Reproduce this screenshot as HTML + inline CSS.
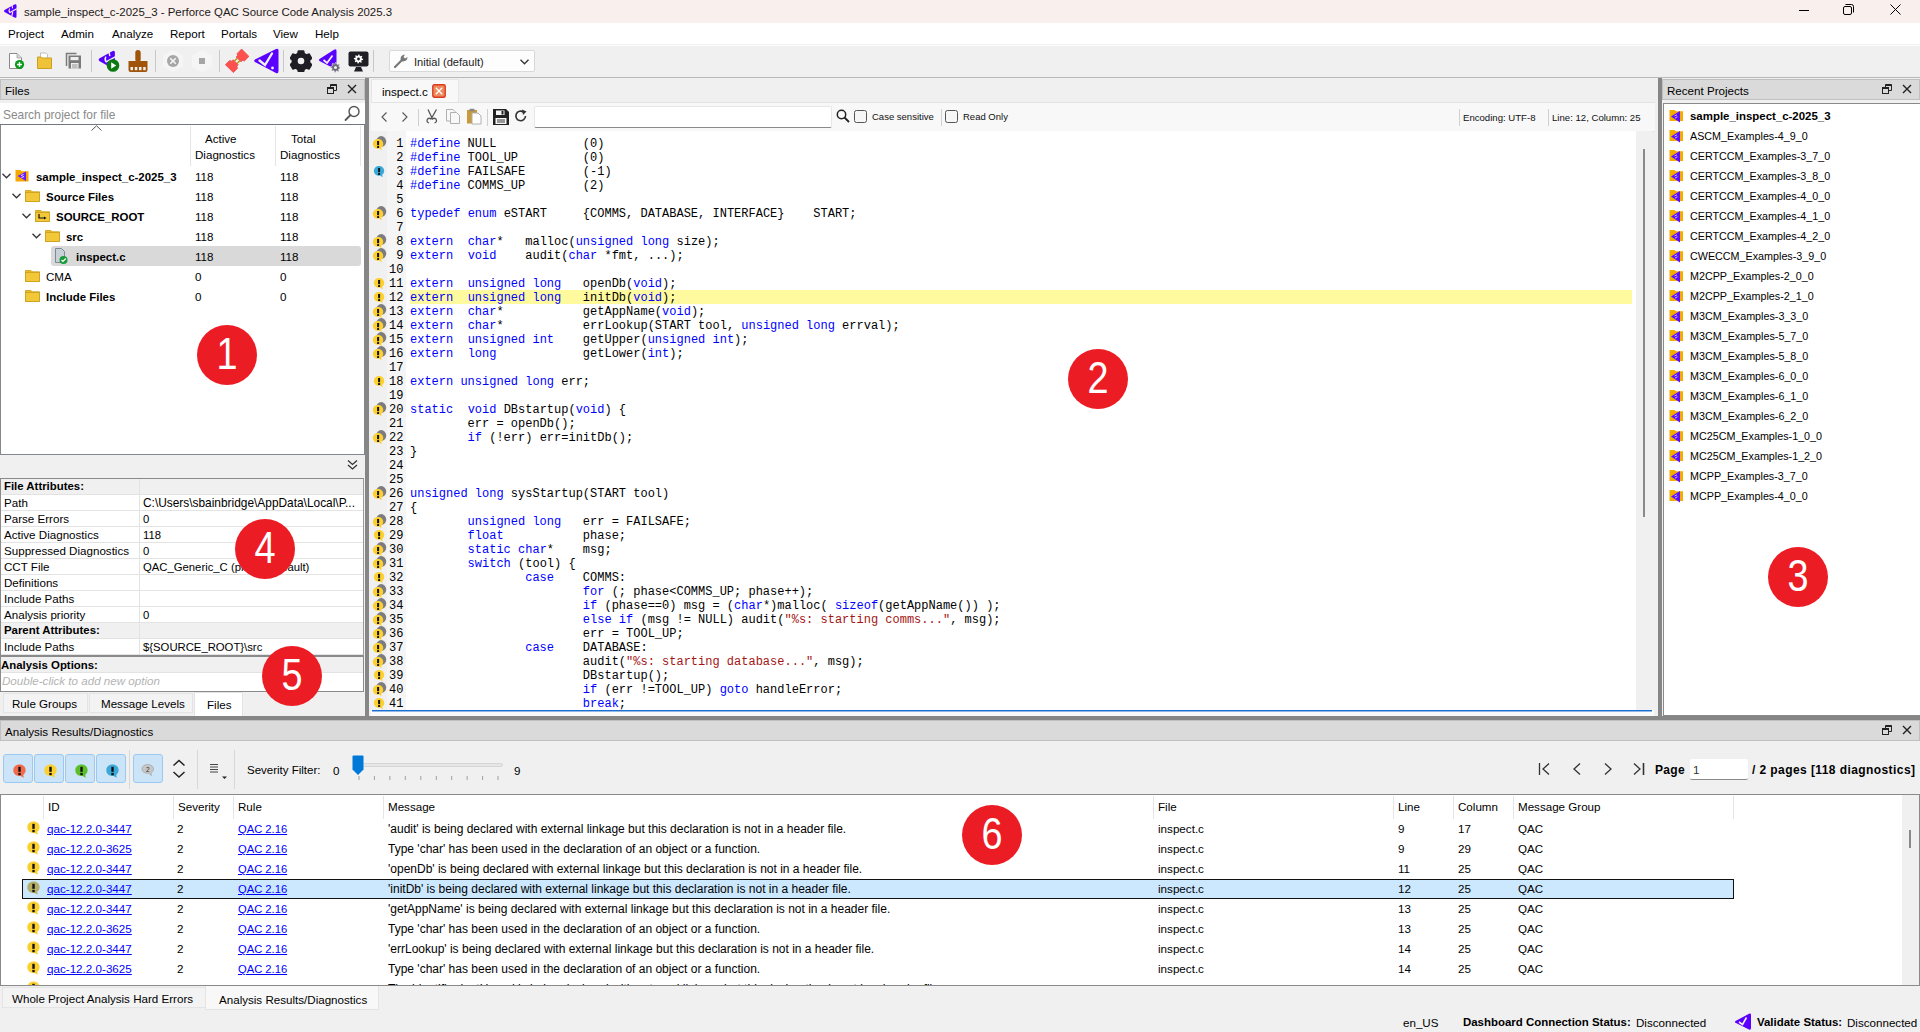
<!DOCTYPE html><html><head><meta charset="utf-8"><style>
html,body{margin:0;padding:0;}
body{width:1920px;height:1032px;position:relative;overflow:hidden;background:#f0f0f0;font-family:"Liberation Sans",sans-serif;}
div{box-sizing:border-box;}
svg{display:block}
.code{position:absolute;font-family:"Liberation Mono",monospace;font-size:12px;line-height:14px;white-space:pre;color:#000;}
.k{color:#0000ff}
.s{color:#a31515}
.lnk{color:#0000ee;text-decoration:underline}
</style></head><body>
<div style="position:absolute;left:0px;top:0px;width:1920px;height:23px;background:#f9efec;"></div><svg style="position:absolute;left:0px;top:0px" width="20" height="22" viewBox="0 0 20 22"><path d="M4.5 10 Q3.5 11 4.5 12 L14.5 17.5 Q16.5 18.5 16.5 16.5 V5.5 Q16.5 3.5 14.5 4.5 Z" fill="#5500ff"/><path d="M12 5 L12.6 8.3 M9.6 8.6 Q8.3 11 9.8 12.6 L16.8 8.8 M12.8 12 L11.8 16" stroke="#f8efed" stroke-width="1.1" fill="none"/></svg><div style="position:absolute;left:24px;top:5px;font-size:11.45px;line-height:15px;color:#1a1a1a;white-space:pre;font-family:'Liberation Sans', sans-serif;">sample_inspect_c-2025_3 - Perforce QAC Source Code Analysis 2025.3</div><svg style="position:absolute;left:1798px;top:3px" width="14" height="14"><path d="M1 7.5 H11" stroke="#000" stroke-width="1"/></svg><svg style="position:absolute;left:1842px;top:3px" width="14" height="14"><rect x="1.5" y="3.5" width="8" height="8" rx="1.5" fill="none" stroke="#000"/><path d="M3.5 1.5 H9.5 Q11.5 1.5 11.5 3.5 V9.5" fill="none" stroke="#000"/></svg><svg style="position:absolute;left:1889px;top:3px" width="14" height="14"><path d="M1.5 1.5 L11.5 11.5 M11.5 1.5 L1.5 11.5" stroke="#000" stroke-width="1"/></svg><div style="position:absolute;left:0px;top:23px;width:1920px;height:22px;background:#ffffff;"></div><div style="position:absolute;left:0px;top:44px;width:1920px;height:1px;background:#f2f2f2;"></div><div style="position:absolute;left:8px;top:26px;font-size:11.6px;line-height:15px;color:#000;white-space:pre;font-family:'Liberation Sans', sans-serif;">Project</div><div style="position:absolute;left:61px;top:26px;font-size:11.6px;line-height:15px;color:#000;white-space:pre;font-family:'Liberation Sans', sans-serif;">Admin</div><div style="position:absolute;left:112px;top:26px;font-size:11.6px;line-height:15px;color:#000;white-space:pre;font-family:'Liberation Sans', sans-serif;">Analyze</div><div style="position:absolute;left:170px;top:26px;font-size:11.6px;line-height:15px;color:#000;white-space:pre;font-family:'Liberation Sans', sans-serif;">Report</div><div style="position:absolute;left:221px;top:26px;font-size:11.6px;line-height:15px;color:#000;white-space:pre;font-family:'Liberation Sans', sans-serif;">Portals</div><div style="position:absolute;left:273px;top:26px;font-size:11.6px;line-height:15px;color:#000;white-space:pre;font-family:'Liberation Sans', sans-serif;">View</div><div style="position:absolute;left:315px;top:26px;font-size:11.6px;line-height:15px;color:#000;white-space:pre;font-family:'Liberation Sans', sans-serif;">Help</div><div style="position:absolute;left:0px;top:45px;width:1920px;height:33px;background:#f0f0f0;border-top:1px solid #fcfcfc"></div><div style="position:absolute;left:0px;top:77px;width:1920px;height:1px;background:#b8b8b8;"></div><div style="position:absolute;left:0px;top:78px;width:1920px;height:1px;background:#f4f4f4;"></div><svg style="position:absolute;left:8px;top:52px" width="18" height="18" viewBox="0 0 18 18"><path d="M1.5 1.5 H9 L13.5 6 V16.5 H1.5 Z" fill="#fff" stroke="#8a8a8a"/><path d="M9 1.5 V6 H13.5" fill="#d8d8d8" stroke="#8a8a8a" stroke-width="0.6"/><circle cx="11.5" cy="12.5" r="4.6" fill="#0a9a1a"/><path d="M11.5 10 V15 M9 12.5 H14" stroke="#fff" stroke-width="1.4"/></svg><svg style="position:absolute;left:36px;top:52px" width="18" height="18" viewBox="0 0 18 18"><path d="M4.5 1 H10 L11.5 2.5 V7 H4.5 Z" fill="#fff" stroke="#999" stroke-width="0.6"/><path d="M1.5 5 H5 L6 6 H15.5 V16.5 H1.5 Z" fill="#f0c23a" stroke="#c9a020"/></svg><svg style="position:absolute;left:65px;top:52px" width="18" height="18" viewBox="0 0 18 18"><path d="M1.5 14 V1.5 H11.5" fill="none" stroke="#7a7a7a" stroke-width="1.5"/><rect x="3.5" y="3.5" width="12.5" height="13" fill="#7a7a7a"/><rect x="5.5" y="5" width="8" height="3.2" fill="#eee"/><rect x="6" y="11" width="7.5" height="5.5" fill="#eee"/><path d="M7 13 H12.5 M7 15 H12.5" stroke="#7a7a7a" stroke-width="0.8"/></svg><div style="position:absolute;left:91px;top:50px;width:1px;height:22px;background:#c8c8c8;"></div><svg style="position:absolute;left:97px;top:49px" width="24" height="24" viewBox="0 0 24 24"><g transform="translate(-3.6,-3.6) scale(1.3)"><path d="M4.5 10 Q3.5 11 4.5 12 L14.5 17.5 Q16.5 18.5 16.5 16.5 V5.5 Q16.5 3.5 14.5 4.5 Z" fill="#5500ff"/><path d="M12 5 L12.6 8.3 M9.6 8.6 Q8.3 11 9.8 12.6 L16.8 8.8 M12.8 12 L11.8 16" stroke="#f0f0f0" stroke-width="1.1" fill="none"/></g><circle cx="16" cy="16.5" r="6.3" fill="#0b7a12"/><path d="M14.2 13.3 V19.7 L19.2 16.5 Z" fill="#fff"/></svg><svg style="position:absolute;left:126px;top:49px" width="24" height="24" viewBox="0 0 24 24"><rect x="9.3" y="1" width="5.4" height="12" rx="2.7" fill="#a0540a"/><path d="M2.5 12 H21.5 V21 Q21.5 23 19.5 23 H4.5 Q2.5 23 2.5 21 Z" fill="#a0540a"/><rect x="4.5" y="18" width="2.5" height="3.2" fill="#f0f0f0"/><rect x="8.8" y="18" width="2.5" height="3.2" fill="#f0f0f0"/><rect x="13" y="18" width="2.5" height="3.2" fill="#f0f0f0"/><rect x="17.2" y="18" width="2.5" height="3.2" fill="#f0f0f0"/></svg><div style="position:absolute;left:155px;top:50px;width:1px;height:22px;background:#c8c8c8;"></div><svg style="position:absolute;left:161px;top:49px" width="24" height="24" viewBox="0 0 24 24"><path d="M12 1 L22 6.5 V17.5 L12 23 L2 17.5 V6.5 Z" fill="#f5f5f5"/><circle cx="12" cy="12" r="6" fill="#a6a6a6"/><path d="M9.2 9.2 L14.8 14.8 M14.8 9.2 L9.2 14.8" stroke="#f5f5f5" stroke-width="1.6"/></svg><svg style="position:absolute;left:190px;top:49px" width="24" height="24" viewBox="0 0 24 24"><path d="M12 1 L22 6.5 V17.5 L12 23 L2 17.5 V6.5 Z" fill="#f5f5f5"/><rect x="9" y="9" width="6" height="6" fill="#a6a6a6"/></svg><div style="position:absolute;left:219px;top:50px;width:1px;height:22px;background:#c8c8c8;"></div><svg style="position:absolute;left:225px;top:49px" width="24" height="24" viewBox="0 0 24 24"><g transform="translate(12.5,11.5) rotate(-45)"><path d="M1.5 -3.4 H3.5 L4.5 -5.2 H11 V5.2 H4.5 L3.5 3.4 H1.5 Z" fill="#ff5050" stroke="#e03a3a" stroke-width="0.6"/><path d="M-2.5 -3.6 H-4.5 L-5.5 -5.6 H-11.5 V5.6 H-5.5 L-4.5 3.6 H-2.5 Z" fill="#ff5050" stroke="#e03a3a" stroke-width="0.6"/><path d="M-2.5 -1.8 H1.5 M-2.5 1.8 H1.5" stroke="#b8960a" stroke-width="1.5"/></g></svg><svg style="position:absolute;left:253px;top:48px" width="27" height="26" viewBox="0 0 27 26"><path d="M2 11.5 Q0.5 12.7 2 14 L23 25 Q25.5 26 25.5 23 V2.5 Q25.5 0 23 1 Z" fill="#5a00ff"/><path d="M6.5 12.5 L12 17 L19 5.5" stroke="#f0f0f0" stroke-width="2.4" fill="none" stroke-linecap="round"/><circle cx="19.5" cy="20" r="1.4" fill="#f0f0f0"/></svg><div style="position:absolute;left:283px;top:50px;width:1px;height:22px;background:#c8c8c8;"></div><svg style="position:absolute;left:290px;top:50px" width="22" height="22" viewBox="0 0 22 22"><g transform="translate(11,11)"><path d="M-2.6 -10 H2.6 L3.2 -7.3 L5.6 -6 L8.2 -7 L10.6 -2.6 L8.6 -0.8 V1.6 L10.6 3.6 L8 8 L5.4 7 L3.2 8.4 L2.6 10.5 H-2.6 L-3.2 8.4 L-5.4 7 L-8 8 L-10.6 3.6 L-8.6 1.6 V-0.8 L-10.6 -2.6 L-8.2 -7 L-5.6 -6 L-3.2 -7.3 Z" fill="#1e1e24" stroke="#1e1e24" stroke-width="1.5" stroke-linejoin="round"/><circle r="3.3" fill="#f0f0f0"/></g></svg><svg style="position:absolute;left:318px;top:49px" width="22" height="24" viewBox="0 0 22 24"><path d="M1.5 10 Q0.5 11 1.5 12 L16 19.5 Q18.5 20.5 18.5 18 V2 Q18.5 -0.5 16 0.8 Z" fill="#5a00ff"/><path d="M5.5 11 L9 14 L14.5 6.5" stroke="#f0f0f0" stroke-width="1.8" fill="none"/><path d="M17.50 13.50 L18.48 13.60 L18.88 15.17 L19.50 15.51 L21.04 14.96 L21.66 15.72 L20.83 17.12 L21.03 17.80 L22.50 18.50 L22.40 19.48 L20.83 19.88 L20.49 20.50 L21.04 22.04 L20.28 22.66 L18.88 21.83 L18.20 22.03 L17.50 23.50 L16.52 23.40 L16.12 21.83 L15.50 21.49 L13.96 22.04 L13.34 21.28 L14.17 19.88 L13.97 19.20 L12.50 18.50 L12.60 17.52 L14.17 17.12 L14.51 16.50 L13.96 14.96 L14.72 14.34 L16.12 15.17 L16.80 14.97 Z" fill="#6b6b78" stroke="#f0f0f0" stroke-width="0.6"/><circle cx="17.5" cy="18.5" r="1.5" fill="#f0f0f0"/></svg><svg style="position:absolute;left:348px;top:51px" width="21" height="21" viewBox="0 0 21 21"><rect x="0.5" y="0.5" width="20" height="15" rx="2" fill="#1e1e24"/><path d="M6 20.5 H15 L13 16 H8 Z" fill="#1e1e24"/><path d="M10.50 3.40 L11.40 3.49 L11.76 4.95 L12.33 5.26 L13.75 4.75 L14.32 5.44 L13.55 6.74 L13.74 7.36 L15.10 8.00 L15.01 8.90 L13.55 9.26 L13.24 9.83 L13.75 11.25 L13.06 11.82 L11.76 11.05 L11.14 11.24 L10.50 12.60 L9.60 12.51 L9.24 11.05 L8.67 10.74 L7.25 11.25 L6.68 10.56 L7.45 9.26 L7.26 8.64 L5.90 8.00 L5.99 7.10 L7.45 6.74 L7.76 6.17 L7.25 4.75 L7.94 4.18 L9.24 4.95 L9.86 4.76 Z" fill="#fff"/><circle cx="10.5" cy="8" r="1.4" fill="#1e1e24"/></svg><div style="position:absolute;left:373px;top:50px;width:1px;height:22px;background:#c8c8c8;"></div><div style="position:absolute;left:389px;top:50px;width:146px;height:22px;background:#fdfdfd;border:1px solid #d9d9d9;border-radius:2px"></div><svg style="position:absolute;left:393px;top:53px" width="16" height="16" viewBox="0 0 16 16"><path d="M2 14 L9 7" stroke="#777" stroke-width="2.2" stroke-linecap="round"/><path d="M8 8 Q6.5 3.5 10 2 L12 1.5 L10.5 4 L12 5.5 L14.5 4 Q14.5 8 10 8.5 Z" fill="#777"/></svg><div style="position:absolute;left:414px;top:55px;font-size:11.1px;line-height:15px;color:#222;white-space:pre;font-family:'Liberation Sans', sans-serif;">Initial (default)</div><svg style="position:absolute;left:520px;top:59px" width="9" height="6" viewBox="0 0 9 6"><path d="M0.5 0.8 L4.5 4.8 L8.5 0.8" stroke="#333" stroke-width="1.3" fill="none"/></svg><div style="position:absolute;left:365px;top:78px;width:4px;height:640px;background:#868686;"></div><div style="position:absolute;left:1658px;top:78px;width:4px;height:640px;background:#868686;"></div><div style="position:absolute;left:0px;top:716px;width:1920px;height:4px;background:#868686;"></div><div style="position:absolute;left:0px;top:79px;width:365px;height:21px;background:#dadada;border:1px solid #c0c0c0"></div><div style="position:absolute;left:5px;top:83px;font-size:11.6px;line-height:15px;color:#000;white-space:pre;font-family:'Liberation Sans', sans-serif;">Files</div><svg style="position:absolute;left:327px;top:84px" width="10" height="10" viewBox="0 0 10 10"><rect x="0.5" y="3.5" width="6" height="6" fill="none" stroke="#222"/><path d="M3.5 3.5 V0.5 H9.5 V6.5 H6.5" fill="none" stroke="#222"/><rect x="0.5" y="3.5" width="6" height="1.5" fill="#222"/><rect x="3.5" y="0.5" width="6" height="1.5" fill="#222"/></svg><svg style="position:absolute;left:347px;top:84px" width="10" height="10" viewBox="0 0 10 10"><path d="M1 1 L9 9 M9 1 L1 9" stroke="#222" stroke-width="1.4"/></svg><div style="position:absolute;left:0px;top:100px;width:365px;height:26px;background:#ffffff;border-top:3px solid #f0f0f0;border-bottom:2px solid #737880"></div><div style="position:absolute;left:3px;top:108px;font-size:11.9px;line-height:15px;color:#8a8a8a;white-space:pre;font-family:'Liberation Sans', sans-serif;">Search project for file</div><svg style="position:absolute;left:344px;top:105px" width="17" height="17" viewBox="0 0 17 17"><circle cx="10" cy="6.5" r="5" fill="none" stroke="#555" stroke-width="1.4"/><path d="M6.5 10 L1.5 15" stroke="#555" stroke-width="1.8" stroke-linecap="round"/></svg><div style="position:absolute;left:0px;top:125px;width:365px;height:330px;background:#ffffff;border-left:1px solid #828790;border-right:1px solid #828790;border-bottom:1px solid #828790"></div><svg style="position:absolute;left:91px;top:125px" width="11" height="6" viewBox="0 0 11 6"><path d="M0.5 5.5 L5.5 0.8 L10.5 5.5" fill="none" stroke="#555" stroke-width="1"/></svg><div style="position:absolute;left:190px;top:126px;width:1px;height:40px;background:#e5e5e5;"></div><div style="position:absolute;left:275px;top:126px;width:1px;height:40px;background:#e5e5e5;"></div><div style="position:absolute;left:360px;top:126px;width:1px;height:40px;background:#e5e5e5;"></div><div style="position:absolute;left:205px;top:131px;font-size:11.6px;line-height:15px;color:#000;white-space:pre;font-family:'Liberation Sans', sans-serif;">Active</div><div style="position:absolute;left:195px;top:147px;font-size:11.6px;line-height:15px;color:#000;white-space:pre;font-family:'Liberation Sans', sans-serif;">Diagnostics</div><div style="position:absolute;left:291px;top:131px;font-size:11.6px;line-height:15px;color:#000;white-space:pre;font-family:'Liberation Sans', sans-serif;">Total</div><div style="position:absolute;left:280px;top:147px;font-size:11.6px;line-height:15px;color:#000;white-space:pre;font-family:'Liberation Sans', sans-serif;">Diagnostics</div><div style="position:absolute;left:51px;top:246px;width:310px;height:20px;background:#d9d9d9;border-radius:3px"></div><svg style="position:absolute;left:2px;top:173px" width="9" height="6" viewBox="0 0 9 6"><path d="M0.5 0.8 L4.5 4.8 L8.5 0.8" stroke="#333" stroke-width="1.3" fill="none"/></svg><svg style="position:absolute;left:15px;top:169px" width="14" height="13" viewBox="0 0 14 13"><path d="M0.5 1 H5.5 L6.5 2.3 H13.5 V12.5 H0.5 Z" fill="#f5a800"/><path d="M2.5 7 L11 2.5 L11 12 Z" fill="#6a1bff"/><path d="M6 6.5 L8.5 5.5 M6.5 8.5 L9 7.5" stroke="#fff" stroke-width="1"/></svg><div style="position:absolute;left:36px;top:169px;font-size:11.45px;line-height:16px;color:#000;font-weight:bold;white-space:pre;font-family:'Liberation Sans', sans-serif;">sample_inspect_c-2025_3</div><div style="position:absolute;left:195px;top:169px;font-size:11.6px;line-height:16px;color:#000;white-space:pre;font-family:'Liberation Sans', sans-serif;">118</div><div style="position:absolute;left:280px;top:169px;font-size:11.6px;line-height:16px;color:#000;white-space:pre;font-family:'Liberation Sans', sans-serif;">118</div><svg style="position:absolute;left:12px;top:193px" width="9" height="6" viewBox="0 0 9 6"><path d="M0.5 0.8 L4.5 4.8 L8.5 0.8" stroke="#333" stroke-width="1.3" fill="none"/></svg><svg style="position:absolute;left:25px;top:189px" width="15" height="13" viewBox="0 0 15 13"><path d="M0.5 1.5 H6 L7 2.8 H14.5 V12.5 H0.5 Z" fill="#e8b923" stroke="#c9a020" stroke-width="0.8"/><rect x="0.5" y="3.5" width="14" height="9" fill="#f3c838" stroke="#c9a020" stroke-width="0.8"/></svg><div style="position:absolute;left:46px;top:189px;font-size:11.45px;line-height:16px;color:#000;font-weight:bold;white-space:pre;font-family:'Liberation Sans', sans-serif;">Source Files</div><div style="position:absolute;left:195px;top:189px;font-size:11.6px;line-height:16px;color:#000;white-space:pre;font-family:'Liberation Sans', sans-serif;">118</div><div style="position:absolute;left:280px;top:189px;font-size:11.6px;line-height:16px;color:#000;white-space:pre;font-family:'Liberation Sans', sans-serif;">118</div><svg style="position:absolute;left:22px;top:213px" width="9" height="6" viewBox="0 0 9 6"><path d="M0.5 0.8 L4.5 4.8 L8.5 0.8" stroke="#333" stroke-width="1.3" fill="none"/></svg><svg style="position:absolute;left:35px;top:209px" width="15" height="13" viewBox="0 0 15 13"><path d="M0.5 1.5 H6 L7 2.8 H14.5 V12.5 H0.5 Z" fill="#e8b923" stroke="#c9a020" stroke-width="0.8"/><rect x="0.5" y="3.5" width="14" height="9" fill="#f3c838" stroke="#c9a020" stroke-width="0.8"/><path d="M4 5 V9 H10" stroke="#111" stroke-width="1.2" fill="none"/><path d="M9 7.5 L11.5 9 L9 10.5Z" fill="#111"/></svg><div style="position:absolute;left:56px;top:209px;font-size:11.45px;line-height:16px;color:#000;font-weight:bold;white-space:pre;font-family:'Liberation Sans', sans-serif;">SOURCE_ROOT</div><div style="position:absolute;left:195px;top:209px;font-size:11.6px;line-height:16px;color:#000;white-space:pre;font-family:'Liberation Sans', sans-serif;">118</div><div style="position:absolute;left:280px;top:209px;font-size:11.6px;line-height:16px;color:#000;white-space:pre;font-family:'Liberation Sans', sans-serif;">118</div><svg style="position:absolute;left:32px;top:233px" width="9" height="6" viewBox="0 0 9 6"><path d="M0.5 0.8 L4.5 4.8 L8.5 0.8" stroke="#333" stroke-width="1.3" fill="none"/></svg><svg style="position:absolute;left:45px;top:229px" width="15" height="13" viewBox="0 0 15 13"><path d="M0.5 1.5 H6 L7 2.8 H14.5 V12.5 H0.5 Z" fill="#e8b923" stroke="#c9a020" stroke-width="0.8"/><rect x="0.5" y="3.5" width="14" height="9" fill="#f3c838" stroke="#c9a020" stroke-width="0.8"/></svg><div style="position:absolute;left:66px;top:229px;font-size:11.45px;line-height:16px;color:#000;font-weight:bold;white-space:pre;font-family:'Liberation Sans', sans-serif;">src</div><div style="position:absolute;left:195px;top:229px;font-size:11.6px;line-height:16px;color:#000;white-space:pre;font-family:'Liberation Sans', sans-serif;">118</div><div style="position:absolute;left:280px;top:229px;font-size:11.6px;line-height:16px;color:#000;white-space:pre;font-family:'Liberation Sans', sans-serif;">118</div><svg style="position:absolute;left:53px;top:247px" width="16" height="18" viewBox="0 0 16 18"><path d="M2.5 1.5 H8.5 L11.5 4.5 V15.5 H2.5 Z" fill="#c8d0d8" stroke="#7d8a96"/><circle cx="10.5" cy="13" r="4" fill="#1a9a3a"/><path d="M8.5 13 L10 14.5 L12.8 11.5" stroke="#fff" stroke-width="1.2" fill="none"/></svg><div style="position:absolute;left:76px;top:249px;font-size:11.45px;line-height:16px;color:#000;font-weight:bold;white-space:pre;font-family:'Liberation Sans', sans-serif;">inspect.c</div><div style="position:absolute;left:195px;top:249px;font-size:11.6px;line-height:16px;color:#000;white-space:pre;font-family:'Liberation Sans', sans-serif;">118</div><div style="position:absolute;left:280px;top:249px;font-size:11.6px;line-height:16px;color:#000;white-space:pre;font-family:'Liberation Sans', sans-serif;">118</div><svg style="position:absolute;left:25px;top:269px" width="15" height="13" viewBox="0 0 15 13"><path d="M0.5 1.5 H6 L7 2.8 H14.5 V12.5 H0.5 Z" fill="#e8b923" stroke="#c9a020" stroke-width="0.8"/><rect x="0.5" y="3.5" width="14" height="9" fill="#f3c838" stroke="#c9a020" stroke-width="0.8"/></svg><div style="position:absolute;left:46px;top:269px;font-size:11.6px;line-height:16px;color:#000;white-space:pre;font-family:'Liberation Sans', sans-serif;">CMA</div><div style="position:absolute;left:195px;top:269px;font-size:11.6px;line-height:16px;color:#000;white-space:pre;font-family:'Liberation Sans', sans-serif;">0</div><div style="position:absolute;left:280px;top:269px;font-size:11.6px;line-height:16px;color:#000;white-space:pre;font-family:'Liberation Sans', sans-serif;">0</div><svg style="position:absolute;left:25px;top:289px" width="15" height="13" viewBox="0 0 15 13"><path d="M0.5 1.5 H6 L7 2.8 H14.5 V12.5 H0.5 Z" fill="#e8b923" stroke="#c9a020" stroke-width="0.8"/><rect x="0.5" y="3.5" width="14" height="9" fill="#f3c838" stroke="#c9a020" stroke-width="0.8"/></svg><div style="position:absolute;left:46px;top:289px;font-size:11.45px;line-height:16px;color:#000;font-weight:bold;white-space:pre;font-family:'Liberation Sans', sans-serif;">Include Files</div><div style="position:absolute;left:195px;top:289px;font-size:11.6px;line-height:16px;color:#000;white-space:pre;font-family:'Liberation Sans', sans-serif;">0</div><div style="position:absolute;left:280px;top:289px;font-size:11.6px;line-height:16px;color:#000;white-space:pre;font-family:'Liberation Sans', sans-serif;">0</div><div style="position:absolute;left:197px;top:325px;width:60px;height:60px;border-radius:50%;background:#ec1c24;color:#fff;font:44px/58px 'Liberation Sans',sans-serif;text-align:center"><div style="transform:scaleX(0.86)">1</div></div><div style="position:absolute;left:0px;top:455px;width:365px;height:23px;background:#f0f0f0;"></div><svg style="position:absolute;left:347px;top:459px" width="11" height="12" viewBox="0 0 11 12"><path d="M1 1.5 L5.5 5.5 L10 1.5 M1 6 L5.5 10 L10 6" fill="none" stroke="#333" stroke-width="1.3"/></svg><div style="position:absolute;left:0px;top:478px;width:364px;height:178px;background:#ffffff;border:1px solid #8a8a8a;border-right:1px solid #9a9a9a"></div><div style="position:absolute;left:1px;top:479px;width:362px;height:15px;background:#f0f0f0;"></div><div style="position:absolute;left:4px;top:479px;font-size:11.4px;line-height:15px;color:#000;font-weight:bold;white-space:pre;font-family:'Liberation Sans', sans-serif;">File Attributes:</div><div style="position:absolute;left:1px;top:494px;width:362px;height:1px;background:#e3e3e3;"></div><div style="position:absolute;left:4px;top:495px;font-size:11.6px;line-height:15px;color:#000;white-space:pre;font-family:'Liberation Sans', sans-serif;">Path</div><div style="position:absolute;left:143px;top:496px;font-size:11.9px;line-height:15px;color:#000;white-space:pre;font-family:'Liberation Sans', sans-serif;">C:\Users\sbainbridge\AppData\Local\P...</div><div style="position:absolute;left:1px;top:510px;width:362px;height:1px;background:#e3e3e3;"></div><div style="position:absolute;left:4px;top:511px;font-size:11.6px;line-height:15px;color:#000;white-space:pre;font-family:'Liberation Sans', sans-serif;">Parse Errors</div><div style="position:absolute;left:143px;top:512px;font-size:11.3px;line-height:15px;color:#000;white-space:pre;font-family:'Liberation Sans', sans-serif;">0</div><div style="position:absolute;left:1px;top:526px;width:362px;height:1px;background:#e3e3e3;"></div><div style="position:absolute;left:4px;top:527px;font-size:11.6px;line-height:15px;color:#000;white-space:pre;font-family:'Liberation Sans', sans-serif;">Active Diagnostics</div><div style="position:absolute;left:143px;top:528px;font-size:11.3px;line-height:15px;color:#000;white-space:pre;font-family:'Liberation Sans', sans-serif;">118</div><div style="position:absolute;left:1px;top:542px;width:362px;height:1px;background:#e3e3e3;"></div><div style="position:absolute;left:4px;top:543px;font-size:11.6px;line-height:15px;color:#000;white-space:pre;font-family:'Liberation Sans', sans-serif;">Suppressed Diagnostics</div><div style="position:absolute;left:143px;top:544px;font-size:11.3px;line-height:15px;color:#000;white-space:pre;font-family:'Liberation Sans', sans-serif;">0</div><div style="position:absolute;left:1px;top:558px;width:362px;height:1px;background:#e3e3e3;"></div><div style="position:absolute;left:4px;top:559px;font-size:11.6px;line-height:15px;color:#000;white-space:pre;font-family:'Liberation Sans', sans-serif;">CCT File</div><div style="position:absolute;left:143px;top:560px;font-size:11.3px;line-height:15px;color:#000;white-space:pre;font-family:'Liberation Sans', sans-serif;">QAC_Generic_C (project default)</div><div style="position:absolute;left:1px;top:574px;width:362px;height:1px;background:#e3e3e3;"></div><div style="position:absolute;left:4px;top:575px;font-size:11.6px;line-height:15px;color:#000;white-space:pre;font-family:'Liberation Sans', sans-serif;">Definitions</div><div style="position:absolute;left:143px;top:576px;font-size:11.3px;line-height:15px;color:#000;white-space:pre;font-family:'Liberation Sans', sans-serif;"></div><div style="position:absolute;left:1px;top:590px;width:362px;height:1px;background:#e3e3e3;"></div><div style="position:absolute;left:4px;top:591px;font-size:11.6px;line-height:15px;color:#000;white-space:pre;font-family:'Liberation Sans', sans-serif;">Include Paths</div><div style="position:absolute;left:143px;top:592px;font-size:11.3px;line-height:15px;color:#000;white-space:pre;font-family:'Liberation Sans', sans-serif;"></div><div style="position:absolute;left:1px;top:606px;width:362px;height:1px;background:#e3e3e3;"></div><div style="position:absolute;left:4px;top:607px;font-size:11.6px;line-height:15px;color:#000;white-space:pre;font-family:'Liberation Sans', sans-serif;">Analysis priority</div><div style="position:absolute;left:143px;top:608px;font-size:11.3px;line-height:15px;color:#000;white-space:pre;font-family:'Liberation Sans', sans-serif;">0</div><div style="position:absolute;left:1px;top:622px;width:362px;height:1px;background:#e3e3e3;"></div><div style="position:absolute;left:1px;top:623px;width:362px;height:15px;background:#f0f0f0;"></div><div style="position:absolute;left:4px;top:623px;font-size:11.4px;line-height:15px;color:#000;font-weight:bold;white-space:pre;font-family:'Liberation Sans', sans-serif;">Parent Attributes:</div><div style="position:absolute;left:1px;top:638px;width:362px;height:1px;background:#e3e3e3;"></div><div style="position:absolute;left:4px;top:639px;font-size:11.6px;line-height:15px;color:#000;white-space:pre;font-family:'Liberation Sans', sans-serif;">Include Paths</div><div style="position:absolute;left:143px;top:640px;font-size:11.3px;line-height:15px;color:#000;white-space:pre;font-family:'Liberation Sans', sans-serif;">${SOURCE_ROOT}\src</div><div style="position:absolute;left:1px;top:654px;width:362px;height:1px;background:#e3e3e3;"></div><div style="position:absolute;left:139px;top:479px;width:1px;height:176px;background:#e3e3e3;"></div><div style="position:absolute;left:0px;top:656px;width:364px;height:36px;background:#ffffff;border:1px solid #8a8a8a"></div><div style="position:absolute;left:1px;top:657px;width:362px;height:16px;background:#f0f0f0;border-bottom:1px solid #e3e3e3"></div><div style="position:absolute;left:1px;top:657px;font-size:11.4px;line-height:16px;color:#000;font-weight:bold;white-space:pre;font-family:'Liberation Sans', sans-serif;">Analysis Options:</div><div style="position:absolute;left:2px;top:673px;font-size:11.6px;line-height:16px;color:#b4b4b4;white-space:pre;font-family:'Liberation Sans', sans-serif;font-style:italic">Double-click to add new option</div><div style="position:absolute;left:0px;top:692px;width:365px;height:24px;background:#f0f0f0;"></div><div style="position:absolute;left:3px;top:693px;width:85px;height:20px;background:#f3f3f3;border:1px solid #e4e4e4"></div><div style="position:absolute;left:12px;top:696px;font-size:11.6px;line-height:15px;color:#000;white-space:pre;font-family:'Liberation Sans', sans-serif;">Rule Groups</div><div style="position:absolute;left:89px;top:693px;width:104px;height:20px;background:#f3f3f3;border:1px solid #e4e4e4"></div><div style="position:absolute;left:101px;top:696px;font-size:11.6px;line-height:15px;color:#000;white-space:pre;font-family:'Liberation Sans', sans-serif;">Message Levels</div><div style="position:absolute;left:194px;top:692px;width:49px;height:24px;background:#ffffff;border:1px solid #e4e4e4;border-bottom:none"></div><div style="position:absolute;left:207px;top:697px;font-size:11.6px;line-height:15px;color:#000;white-space:pre;font-family:'Liberation Sans', sans-serif;">Files</div><div style="position:absolute;left:235px;top:519px;width:60px;height:60px;border-radius:50%;background:#ec1c24;color:#fff;font:44px/58px 'Liberation Sans',sans-serif;text-align:center"><div style="transform:scaleX(0.86)">4</div></div><div style="position:absolute;left:262px;top:646px;width:60px;height:60px;border-radius:50%;background:#ec1c24;color:#fff;font:44px/58px 'Liberation Sans',sans-serif;text-align:center"><div style="transform:scaleX(0.86)">5</div></div><div style="position:absolute;left:369px;top:78px;width:1289px;height:638px;background:#f0f0f0;"></div><div style="position:absolute;left:371px;top:79px;width:88px;height:24px;background:#f8f8f8;border:1px solid #e6e6e6;border-bottom:none"></div><div style="position:absolute;left:382px;top:84px;font-size:11.6px;line-height:15px;color:#000;white-space:pre;font-family:'Liberation Sans', sans-serif;">inspect.c</div><svg style="position:absolute;left:432px;top:84px" width="14" height="14" viewBox="0 0 14 14"><rect x="0.8" y="0.8" width="12.4" height="12.4" rx="1.5" fill="#ec8a5e" stroke="#dc3a1e" stroke-width="1.4"/><path d="M3.8 3.8 L10.2 10.2 M10.2 3.8 L3.8 10.2" stroke="#fff" stroke-width="1.3"/></svg><div style="position:absolute;left:371px;top:102px;width:1284px;height:30px;background:#f8f8f8;border-top:1px solid #e3e3e3;border-bottom:1px solid #e6e6e6"></div><svg style="position:absolute;left:380px;top:111px" width="9" height="12" viewBox="0 0 9 12"><path d="M6.5 1.5 L2 6 L6.5 10.5" fill="none" stroke="#555" stroke-width="1.1"/></svg><svg style="position:absolute;left:400px;top:111px" width="9" height="12" viewBox="0 0 9 12"><path d="M2.5 1.5 L7 6 L2.5 10.5" fill="none" stroke="#555" stroke-width="1.1"/></svg><div style="position:absolute;left:418px;top:109px;width:1px;height:17px;background:#cfcfcf;"></div><svg style="position:absolute;left:425px;top:108px" width="14" height="17" viewBox="0 0 14 17"><path d="M4 15 Q1 14 2.5 11 Q4.5 9.5 6 11 L11.5 1.5 M9.5 15 Q12.5 14 11 11 Q9 9.5 7.5 11 L3 1.5" fill="none" stroke="#555" stroke-width="1.3"/></svg><svg style="position:absolute;left:445px;top:108px" width="16" height="17" viewBox="0 0 16 17"><path d="M1.5 1.5 H8 L10 3.5 V13 H1.5 Z" fill="#f8f8f8" stroke="#b0b0b0"/><path d="M5.5 4.5 H11.5 L14.5 7.5 V15.5 H5.5 Z" fill="#f8f8f8" stroke="#b0b0b0"/></svg><svg style="position:absolute;left:466px;top:108px" width="16" height="17" viewBox="0 0 16 17"><path d="M1 2 H11 V15.5 H1 Z" fill="#c89a3a"/><rect x="3.5" y="0.8" width="5" height="2.5" fill="#888"/><path d="M6 5 H12 L15 8 V16 H6 Z" fill="#fff" stroke="#b0b0b0"/></svg><div style="position:absolute;left:487px;top:109px;width:1px;height:17px;background:#cfcfcf;"></div><svg style="position:absolute;left:492px;top:108px" width="18" height="18" viewBox="0 0 18 18"><path d="M1 1 H14 L17 4 V17 H1 Z" fill="#222"/><rect x="4" y="2.5" width="8.5" height="4.5" fill="#f8f8f8"/><rect x="9.5" y="3" width="2" height="3.5" fill="#222"/><rect x="3.5" y="10" width="11" height="6" fill="#f8f8f8"/><path d="M5 12 H13 M5 14 H13" stroke="#222" stroke-width="0.9"/></svg><svg style="position:absolute;left:514px;top:109px" width="14" height="14" viewBox="0 0 14 14"><path d="M11.5 7 A4.8 4.8 0 1 1 9.5 3" fill="none" stroke="#333" stroke-width="1.6"/><path d="M8 0.5 L12.5 2.5 L9 6 Z" fill="#333"/></svg><div style="position:absolute;left:534px;top:106px;width:298px;height:22px;background:#ffffff;border:1px solid #e6e6e6;border-bottom:1px solid #8a8a8a;border-radius:2px"></div><svg style="position:absolute;left:836px;top:109px" width="14" height="14" viewBox="0 0 14 14"><circle cx="5.5" cy="5.5" r="4.2" fill="none" stroke="#222" stroke-width="1.5"/><path d="M8.5 8.5 L13 13" stroke="#222" stroke-width="1.8"/></svg><div style="position:absolute;left:854px;top:110px;width:13px;height:13px;border:1px solid #555;border-radius:2.5px;background:#f6f6f6"></div><div style="position:absolute;left:872px;top:110px;font-size:9.5px;line-height:13px;color:#111;white-space:pre;font-family:'Liberation Sans', sans-serif;">Case sensitive</div><div style="position:absolute;left:941px;top:109px;width:1px;height:17px;background:#d0d0d0;"></div><div style="position:absolute;left:945px;top:110px;width:13px;height:13px;border:1px solid #555;border-radius:2.5px;background:#f6f6f6"></div><div style="position:absolute;left:963px;top:110px;font-size:9.5px;line-height:13px;color:#111;white-space:pre;font-family:'Liberation Sans', sans-serif;">Read Only</div><div style="position:absolute;left:1459px;top:109px;width:1px;height:17px;background:#d0d0d0;"></div><div style="position:absolute;left:1463px;top:111px;font-size:9.6px;line-height:13px;color:#111;white-space:pre;font-family:'Liberation Sans', sans-serif;">Encoding: UTF-8</div><div style="position:absolute;left:1548px;top:109px;width:1px;height:17px;background:#d0d0d0;"></div><div style="position:absolute;left:1552px;top:111px;font-size:9.6px;line-height:13px;color:#111;white-space:pre;font-family:'Liberation Sans', sans-serif;">Line: 12, Column: 25</div><div style="position:absolute;left:372px;top:131px;width:1264px;height:579px;background:#ffffff;"></div><div style="position:absolute;left:372px;top:131px;width:15px;height:579px;background:#f0f0f0;"></div><div style="position:absolute;left:387px;top:131px;width:19px;height:579px;background:#f5f5f5;"></div><div style="position:absolute;left:1636px;top:131px;width:16px;height:579px;background:#f0f0f0;"></div><div style="position:absolute;left:1643px;top:149px;width:2px;height:368px;background:#8a8a8a;"></div><div style="position:absolute;left:371px;top:710px;width:1283px;height:6px;background:#fafafa;"></div><div style="position:absolute;left:372px;top:710px;width:1280px;height:1px;background:#1a6fd0;"></div><div style="position:absolute;left:372px;top:711px;width:1280px;height:1px;background:#8fb8e8;"></div><div style="position:absolute;left:410px;top:290px;width:1222px;height:14px;background:#fffa9e;"></div><div class="code" style="left:410px;top:137px"><span class="k">#define</span> NULL            (0)
<span class="k">#define</span> TOOL_UP         (0)
<span class="k">#define</span> FAILSAFE        (-1)
<span class="k">#define</span> COMMS_UP        (2)

<span class="k">typedef</span> <span class="k">enum</span> eSTART     {COMMS, DATABASE, INTERFACE}    START;

<span class="k">extern</span>  <span class="k">char</span>*   malloc(<span class="k">unsigned</span> <span class="k">long</span> size);
<span class="k">extern</span>  <span class="k">void</span>    audit(<span class="k">char</span> *fmt, ...);

<span class="k">extern</span>  <span class="k">unsigned</span> <span class="k">long</span>   openDb(<span class="k">void</span>);
<span class="k">extern</span>  <span class="k">unsigned</span> <span class="k">long</span>   initDb(<span class="k">void</span>);
<span class="k">extern</span>  <span class="k">char</span>*           getAppName(<span class="k">void</span>);
<span class="k">extern</span>  <span class="k">char</span>*           errLookup(START tool, <span class="k">unsigned</span> <span class="k">long</span> errval);
<span class="k">extern</span>  <span class="k">unsigned</span> <span class="k">int</span>    getUpper(<span class="k">unsigned</span> <span class="k">int</span>);
<span class="k">extern</span>  <span class="k">long</span>            getLower(<span class="k">int</span>);

<span class="k">extern</span> <span class="k">unsigned</span> <span class="k">long</span> err;

<span class="k">static</span>  <span class="k">void</span> DBstartup(<span class="k">void</span>) {
        err = openDb();
        <span class="k">if</span> (!err) err=initDb();
}


<span class="k">unsigned</span> <span class="k">long</span> sysStartup(START tool)
{
        <span class="k">unsigned</span> <span class="k">long</span>   err = FAILSAFE;
        <span class="k">float</span>           phase;
        <span class="k">static</span> <span class="k">char</span>*    msg;
        <span class="k">switch</span> (tool) {
                <span class="k">case</span>    COMMS:
                        <span class="k">for</span> (; phase&lt;COMMS_UP; phase++);
                        <span class="k">if</span> (phase==0) msg = (<span class="k">char</span>*)malloc( <span class="k">sizeof</span>(getAppName()) );
                        <span class="k">else</span> <span class="k">if</span> (msg != NULL) audit(<span class="s">"%s: starting comms..."</span>, msg);
                        err = TOOL_UP;
                <span class="k">case</span>    DATABASE:
                        audit(<span class="s">"%s: starting database..."</span>, msg);
                        DBstartup();
                        <span class="k">if</span> (err !=TOOL_UP) <span class="k">goto</span> handleError;
                        <span class="k">break</span>;</div><div class="code" style="left:389px;top:137px"> 1
 2
 3
 4
 5
 6
 7
 8
 9
10
11
12
13
14
15
16
17
18
19
20
21
22
23
24
25
26
27
28
29
30
31
32
33
34
35
36
37
38
39
40
41</div><svg style="position:absolute;left:372px;top:136px" width="15" height="15" viewBox="0 0 15 15"><ellipse cx="9.2" cy="5.5" rx="5" ry="5.4" fill="#7c7c80"/><g transform="translate(-1,1)"><path d="M7.1 2 C10.3 2 12.2 4.2 12.2 6.9 C12.2 8.8 11.2 10 10.2 10.6 L10.6 13.2 L8 11.6 C4 12 1.9 9.6 1.9 6.9 C1.9 4.2 3.9 2 7.1 2 Z" fill="#fbd030"/><rect x="6.1" y="4" width="2" height="4.2" fill="#111"/><rect x="6.1" y="9.1" width="2" height="1.9" fill="#111"/></g></svg><svg style="position:absolute;left:372px;top:164px" width="15" height="15" viewBox="0 0 15 15"><g transform="translate(0,0)"><path d="M7.1 2 C10.3 2 12.2 4.2 12.2 6.9 C12.2 8.8 11.2 10 10.2 10.6 L10.6 13.2 L8 11.6 C4 12 1.9 9.6 1.9 6.9 C1.9 4.2 3.9 2 7.1 2 Z" fill="#3aa8d8"/><rect x="6.1" y="4" width="2" height="4.2" fill="#111"/><rect x="6.1" y="9.1" width="2" height="1.9" fill="#111"/></g></svg><svg style="position:absolute;left:372px;top:206px" width="15" height="15" viewBox="0 0 15 15"><ellipse cx="9.2" cy="5.5" rx="5" ry="5.4" fill="#7c7c80"/><g transform="translate(-1,1)"><path d="M7.1 2 C10.3 2 12.2 4.2 12.2 6.9 C12.2 8.8 11.2 10 10.2 10.6 L10.6 13.2 L8 11.6 C4 12 1.9 9.6 1.9 6.9 C1.9 4.2 3.9 2 7.1 2 Z" fill="#fbd030"/><rect x="6.1" y="4" width="2" height="4.2" fill="#111"/><rect x="6.1" y="9.1" width="2" height="1.9" fill="#111"/></g></svg><svg style="position:absolute;left:372px;top:234px" width="15" height="15" viewBox="0 0 15 15"><ellipse cx="9.2" cy="5.5" rx="5" ry="5.4" fill="#7c7c80"/><g transform="translate(-1,1)"><path d="M7.1 2 C10.3 2 12.2 4.2 12.2 6.9 C12.2 8.8 11.2 10 10.2 10.6 L10.6 13.2 L8 11.6 C4 12 1.9 9.6 1.9 6.9 C1.9 4.2 3.9 2 7.1 2 Z" fill="#fbd030"/><rect x="6.1" y="4" width="2" height="4.2" fill="#111"/><rect x="6.1" y="9.1" width="2" height="1.9" fill="#111"/></g></svg><svg style="position:absolute;left:372px;top:248px" width="15" height="15" viewBox="0 0 15 15"><ellipse cx="9.2" cy="5.5" rx="5" ry="5.4" fill="#7c7c80"/><g transform="translate(-1,1)"><path d="M7.1 2 C10.3 2 12.2 4.2 12.2 6.9 C12.2 8.8 11.2 10 10.2 10.6 L10.6 13.2 L8 11.6 C4 12 1.9 9.6 1.9 6.9 C1.9 4.2 3.9 2 7.1 2 Z" fill="#fbd030"/><rect x="6.1" y="4" width="2" height="4.2" fill="#111"/><rect x="6.1" y="9.1" width="2" height="1.9" fill="#111"/></g></svg><svg style="position:absolute;left:372px;top:276px" width="15" height="15" viewBox="0 0 15 15"><g transform="translate(0,0)"><path d="M7.1 2 C10.3 2 12.2 4.2 12.2 6.9 C12.2 8.8 11.2 10 10.2 10.6 L10.6 13.2 L8 11.6 C4 12 1.9 9.6 1.9 6.9 C1.9 4.2 3.9 2 7.1 2 Z" fill="#fbd030"/><rect x="6.1" y="4" width="2" height="4.2" fill="#111"/><rect x="6.1" y="9.1" width="2" height="1.9" fill="#111"/></g></svg><svg style="position:absolute;left:372px;top:290px" width="15" height="15" viewBox="0 0 15 15"><g transform="translate(0,0)"><path d="M7.1 2 C10.3 2 12.2 4.2 12.2 6.9 C12.2 8.8 11.2 10 10.2 10.6 L10.6 13.2 L8 11.6 C4 12 1.9 9.6 1.9 6.9 C1.9 4.2 3.9 2 7.1 2 Z" fill="#fbd030"/><rect x="6.1" y="4" width="2" height="4.2" fill="#111"/><rect x="6.1" y="9.1" width="2" height="1.9" fill="#111"/></g></svg><svg style="position:absolute;left:372px;top:304px" width="15" height="15" viewBox="0 0 15 15"><ellipse cx="9.2" cy="5.5" rx="5" ry="5.4" fill="#7c7c80"/><g transform="translate(-1,1)"><path d="M7.1 2 C10.3 2 12.2 4.2 12.2 6.9 C12.2 8.8 11.2 10 10.2 10.6 L10.6 13.2 L8 11.6 C4 12 1.9 9.6 1.9 6.9 C1.9 4.2 3.9 2 7.1 2 Z" fill="#fbd030"/><rect x="6.1" y="4" width="2" height="4.2" fill="#111"/><rect x="6.1" y="9.1" width="2" height="1.9" fill="#111"/></g></svg><svg style="position:absolute;left:372px;top:318px" width="15" height="15" viewBox="0 0 15 15"><ellipse cx="9.2" cy="5.5" rx="5" ry="5.4" fill="#7c7c80"/><g transform="translate(-1,1)"><path d="M7.1 2 C10.3 2 12.2 4.2 12.2 6.9 C12.2 8.8 11.2 10 10.2 10.6 L10.6 13.2 L8 11.6 C4 12 1.9 9.6 1.9 6.9 C1.9 4.2 3.9 2 7.1 2 Z" fill="#fbd030"/><rect x="6.1" y="4" width="2" height="4.2" fill="#111"/><rect x="6.1" y="9.1" width="2" height="1.9" fill="#111"/></g></svg><svg style="position:absolute;left:372px;top:332px" width="15" height="15" viewBox="0 0 15 15"><ellipse cx="9.2" cy="5.5" rx="5" ry="5.4" fill="#7c7c80"/><g transform="translate(-1,1)"><path d="M7.1 2 C10.3 2 12.2 4.2 12.2 6.9 C12.2 8.8 11.2 10 10.2 10.6 L10.6 13.2 L8 11.6 C4 12 1.9 9.6 1.9 6.9 C1.9 4.2 3.9 2 7.1 2 Z" fill="#fbd030"/><rect x="6.1" y="4" width="2" height="4.2" fill="#111"/><rect x="6.1" y="9.1" width="2" height="1.9" fill="#111"/></g></svg><svg style="position:absolute;left:372px;top:346px" width="15" height="15" viewBox="0 0 15 15"><ellipse cx="9.2" cy="5.5" rx="5" ry="5.4" fill="#7c7c80"/><g transform="translate(-1,1)"><path d="M7.1 2 C10.3 2 12.2 4.2 12.2 6.9 C12.2 8.8 11.2 10 10.2 10.6 L10.6 13.2 L8 11.6 C4 12 1.9 9.6 1.9 6.9 C1.9 4.2 3.9 2 7.1 2 Z" fill="#fbd030"/><rect x="6.1" y="4" width="2" height="4.2" fill="#111"/><rect x="6.1" y="9.1" width="2" height="1.9" fill="#111"/></g></svg><svg style="position:absolute;left:372px;top:374px" width="15" height="15" viewBox="0 0 15 15"><g transform="translate(0,0)"><path d="M7.1 2 C10.3 2 12.2 4.2 12.2 6.9 C12.2 8.8 11.2 10 10.2 10.6 L10.6 13.2 L8 11.6 C4 12 1.9 9.6 1.9 6.9 C1.9 4.2 3.9 2 7.1 2 Z" fill="#fbd030"/><rect x="6.1" y="4" width="2" height="4.2" fill="#111"/><rect x="6.1" y="9.1" width="2" height="1.9" fill="#111"/></g></svg><svg style="position:absolute;left:372px;top:402px" width="15" height="15" viewBox="0 0 15 15"><ellipse cx="9.2" cy="5.5" rx="5" ry="5.4" fill="#7c7c80"/><g transform="translate(-1,1)"><path d="M7.1 2 C10.3 2 12.2 4.2 12.2 6.9 C12.2 8.8 11.2 10 10.2 10.6 L10.6 13.2 L8 11.6 C4 12 1.9 9.6 1.9 6.9 C1.9 4.2 3.9 2 7.1 2 Z" fill="#fbd030"/><rect x="6.1" y="4" width="2" height="4.2" fill="#111"/><rect x="6.1" y="9.1" width="2" height="1.9" fill="#111"/></g></svg><svg style="position:absolute;left:372px;top:430px" width="15" height="15" viewBox="0 0 15 15"><ellipse cx="9.2" cy="5.5" rx="5" ry="5.4" fill="#7c7c80"/><g transform="translate(-1,1)"><path d="M7.1 2 C10.3 2 12.2 4.2 12.2 6.9 C12.2 8.8 11.2 10 10.2 10.6 L10.6 13.2 L8 11.6 C4 12 1.9 9.6 1.9 6.9 C1.9 4.2 3.9 2 7.1 2 Z" fill="#fbd030"/><rect x="6.1" y="4" width="2" height="4.2" fill="#111"/><rect x="6.1" y="9.1" width="2" height="1.9" fill="#111"/></g></svg><svg style="position:absolute;left:372px;top:486px" width="15" height="15" viewBox="0 0 15 15"><ellipse cx="9.2" cy="5.5" rx="5" ry="5.4" fill="#7c7c80"/><g transform="translate(-1,1)"><path d="M7.1 2 C10.3 2 12.2 4.2 12.2 6.9 C12.2 8.8 11.2 10 10.2 10.6 L10.6 13.2 L8 11.6 C4 12 1.9 9.6 1.9 6.9 C1.9 4.2 3.9 2 7.1 2 Z" fill="#fbd030"/><rect x="6.1" y="4" width="2" height="4.2" fill="#111"/><rect x="6.1" y="9.1" width="2" height="1.9" fill="#111"/></g></svg><svg style="position:absolute;left:372px;top:514px" width="15" height="15" viewBox="0 0 15 15"><ellipse cx="9.2" cy="5.5" rx="5" ry="5.4" fill="#7c7c80"/><g transform="translate(-1,1)"><path d="M7.1 2 C10.3 2 12.2 4.2 12.2 6.9 C12.2 8.8 11.2 10 10.2 10.6 L10.6 13.2 L8 11.6 C4 12 1.9 9.6 1.9 6.9 C1.9 4.2 3.9 2 7.1 2 Z" fill="#fbd030"/><rect x="6.1" y="4" width="2" height="4.2" fill="#111"/><rect x="6.1" y="9.1" width="2" height="1.9" fill="#111"/></g></svg><svg style="position:absolute;left:372px;top:528px" width="15" height="15" viewBox="0 0 15 15"><g transform="translate(0,0)"><path d="M7.1 2 C10.3 2 12.2 4.2 12.2 6.9 C12.2 8.8 11.2 10 10.2 10.6 L10.6 13.2 L8 11.6 C4 12 1.9 9.6 1.9 6.9 C1.9 4.2 3.9 2 7.1 2 Z" fill="#fbd030"/><rect x="6.1" y="4" width="2" height="4.2" fill="#111"/><rect x="6.1" y="9.1" width="2" height="1.9" fill="#111"/></g></svg><svg style="position:absolute;left:372px;top:542px" width="15" height="15" viewBox="0 0 15 15"><ellipse cx="9.2" cy="5.5" rx="5" ry="5.4" fill="#7c7c80"/><g transform="translate(-1,1)"><path d="M7.1 2 C10.3 2 12.2 4.2 12.2 6.9 C12.2 8.8 11.2 10 10.2 10.6 L10.6 13.2 L8 11.6 C4 12 1.9 9.6 1.9 6.9 C1.9 4.2 3.9 2 7.1 2 Z" fill="#fbd030"/><rect x="6.1" y="4" width="2" height="4.2" fill="#111"/><rect x="6.1" y="9.1" width="2" height="1.9" fill="#111"/></g></svg><svg style="position:absolute;left:372px;top:556px" width="15" height="15" viewBox="0 0 15 15"><ellipse cx="9.2" cy="5.5" rx="5" ry="5.4" fill="#7c7c80"/><g transform="translate(-1,1)"><path d="M7.1 2 C10.3 2 12.2 4.2 12.2 6.9 C12.2 8.8 11.2 10 10.2 10.6 L10.6 13.2 L8 11.6 C4 12 1.9 9.6 1.9 6.9 C1.9 4.2 3.9 2 7.1 2 Z" fill="#fbd030"/><rect x="6.1" y="4" width="2" height="4.2" fill="#111"/><rect x="6.1" y="9.1" width="2" height="1.9" fill="#111"/></g></svg><svg style="position:absolute;left:372px;top:570px" width="15" height="15" viewBox="0 0 15 15"><g transform="translate(0,0)"><path d="M7.1 2 C10.3 2 12.2 4.2 12.2 6.9 C12.2 8.8 11.2 10 10.2 10.6 L10.6 13.2 L8 11.6 C4 12 1.9 9.6 1.9 6.9 C1.9 4.2 3.9 2 7.1 2 Z" fill="#fbd030"/><rect x="6.1" y="4" width="2" height="4.2" fill="#111"/><rect x="6.1" y="9.1" width="2" height="1.9" fill="#111"/></g></svg><svg style="position:absolute;left:372px;top:584px" width="15" height="15" viewBox="0 0 15 15"><ellipse cx="9.2" cy="5.5" rx="5" ry="5.4" fill="#7c7c80"/><g transform="translate(-1,1)"><path d="M7.1 2 C10.3 2 12.2 4.2 12.2 6.9 C12.2 8.8 11.2 10 10.2 10.6 L10.6 13.2 L8 11.6 C4 12 1.9 9.6 1.9 6.9 C1.9 4.2 3.9 2 7.1 2 Z" fill="#fbd030"/><rect x="6.1" y="4" width="2" height="4.2" fill="#111"/><rect x="6.1" y="9.1" width="2" height="1.9" fill="#111"/></g></svg><svg style="position:absolute;left:372px;top:598px" width="15" height="15" viewBox="0 0 15 15"><ellipse cx="9.2" cy="5.5" rx="5" ry="5.4" fill="#7c7c80"/><g transform="translate(-1,1)"><path d="M7.1 2 C10.3 2 12.2 4.2 12.2 6.9 C12.2 8.8 11.2 10 10.2 10.6 L10.6 13.2 L8 11.6 C4 12 1.9 9.6 1.9 6.9 C1.9 4.2 3.9 2 7.1 2 Z" fill="#fbd030"/><rect x="6.1" y="4" width="2" height="4.2" fill="#111"/><rect x="6.1" y="9.1" width="2" height="1.9" fill="#111"/></g></svg><svg style="position:absolute;left:372px;top:612px" width="15" height="15" viewBox="0 0 15 15"><ellipse cx="9.2" cy="5.5" rx="5" ry="5.4" fill="#7c7c80"/><g transform="translate(-1,1)"><path d="M7.1 2 C10.3 2 12.2 4.2 12.2 6.9 C12.2 8.8 11.2 10 10.2 10.6 L10.6 13.2 L8 11.6 C4 12 1.9 9.6 1.9 6.9 C1.9 4.2 3.9 2 7.1 2 Z" fill="#fbd030"/><rect x="6.1" y="4" width="2" height="4.2" fill="#111"/><rect x="6.1" y="9.1" width="2" height="1.9" fill="#111"/></g></svg><svg style="position:absolute;left:372px;top:626px" width="15" height="15" viewBox="0 0 15 15"><ellipse cx="9.2" cy="5.5" rx="5" ry="5.4" fill="#7c7c80"/><g transform="translate(-1,1)"><path d="M7.1 2 C10.3 2 12.2 4.2 12.2 6.9 C12.2 8.8 11.2 10 10.2 10.6 L10.6 13.2 L8 11.6 C4 12 1.9 9.6 1.9 6.9 C1.9 4.2 3.9 2 7.1 2 Z" fill="#fbd030"/><rect x="6.1" y="4" width="2" height="4.2" fill="#111"/><rect x="6.1" y="9.1" width="2" height="1.9" fill="#111"/></g></svg><svg style="position:absolute;left:372px;top:640px" width="15" height="15" viewBox="0 0 15 15"><ellipse cx="9.2" cy="5.5" rx="5" ry="5.4" fill="#7c7c80"/><g transform="translate(-1,1)"><path d="M7.1 2 C10.3 2 12.2 4.2 12.2 6.9 C12.2 8.8 11.2 10 10.2 10.6 L10.6 13.2 L8 11.6 C4 12 1.9 9.6 1.9 6.9 C1.9 4.2 3.9 2 7.1 2 Z" fill="#fbd030"/><rect x="6.1" y="4" width="2" height="4.2" fill="#111"/><rect x="6.1" y="9.1" width="2" height="1.9" fill="#111"/></g></svg><svg style="position:absolute;left:372px;top:654px" width="15" height="15" viewBox="0 0 15 15"><ellipse cx="9.2" cy="5.5" rx="5" ry="5.4" fill="#7c7c80"/><g transform="translate(-1,1)"><path d="M7.1 2 C10.3 2 12.2 4.2 12.2 6.9 C12.2 8.8 11.2 10 10.2 10.6 L10.6 13.2 L8 11.6 C4 12 1.9 9.6 1.9 6.9 C1.9 4.2 3.9 2 7.1 2 Z" fill="#fbd030"/><rect x="6.1" y="4" width="2" height="4.2" fill="#111"/><rect x="6.1" y="9.1" width="2" height="1.9" fill="#111"/></g></svg><svg style="position:absolute;left:372px;top:668px" width="15" height="15" viewBox="0 0 15 15"><g transform="translate(0,0)"><path d="M7.1 2 C10.3 2 12.2 4.2 12.2 6.9 C12.2 8.8 11.2 10 10.2 10.6 L10.6 13.2 L8 11.6 C4 12 1.9 9.6 1.9 6.9 C1.9 4.2 3.9 2 7.1 2 Z" fill="#fbd030"/><rect x="6.1" y="4" width="2" height="4.2" fill="#111"/><rect x="6.1" y="9.1" width="2" height="1.9" fill="#111"/></g></svg><svg style="position:absolute;left:372px;top:682px" width="15" height="15" viewBox="0 0 15 15"><ellipse cx="9.2" cy="5.5" rx="5" ry="5.4" fill="#7c7c80"/><g transform="translate(-1,1)"><path d="M7.1 2 C10.3 2 12.2 4.2 12.2 6.9 C12.2 8.8 11.2 10 10.2 10.6 L10.6 13.2 L8 11.6 C4 12 1.9 9.6 1.9 6.9 C1.9 4.2 3.9 2 7.1 2 Z" fill="#fbd030"/><rect x="6.1" y="4" width="2" height="4.2" fill="#111"/><rect x="6.1" y="9.1" width="2" height="1.9" fill="#111"/></g></svg><svg style="position:absolute;left:372px;top:696px" width="15" height="15" viewBox="0 0 15 15"><g transform="translate(0,0)"><path d="M7.1 2 C10.3 2 12.2 4.2 12.2 6.9 C12.2 8.8 11.2 10 10.2 10.6 L10.6 13.2 L8 11.6 C4 12 1.9 9.6 1.9 6.9 C1.9 4.2 3.9 2 7.1 2 Z" fill="#fbd030"/><rect x="6.1" y="4" width="2" height="4.2" fill="#111"/><rect x="6.1" y="9.1" width="2" height="1.9" fill="#111"/></g></svg><div style="position:absolute;left:1068px;top:349px;width:60px;height:60px;border-radius:50%;background:#ec1c24;color:#fff;font:44px/58px 'Liberation Sans',sans-serif;text-align:center"><div style="transform:scaleX(0.86)">2</div></div><div style="position:absolute;left:1662px;top:78px;width:258px;height:638px;background:#f0f0f0;"></div><div style="position:absolute;left:1662px;top:79px;width:258px;height:21px;background:#dadada;border:1px solid #c0c0c0"></div><div style="position:absolute;left:1667px;top:83px;font-size:11.6px;line-height:15px;color:#000;white-space:pre;font-family:'Liberation Sans', sans-serif;">Recent Projects</div><svg style="position:absolute;left:1882px;top:84px" width="10" height="10" viewBox="0 0 10 10"><rect x="0.5" y="3.5" width="6" height="6" fill="none" stroke="#222"/><path d="M3.5 3.5 V0.5 H9.5 V6.5 H6.5" fill="none" stroke="#222"/><rect x="0.5" y="3.5" width="6" height="1.5" fill="#222"/><rect x="3.5" y="0.5" width="6" height="1.5" fill="#222"/></svg><svg style="position:absolute;left:1902px;top:84px" width="10" height="10" viewBox="0 0 10 10"><path d="M1 1 L9 9 M9 1 L1 9" stroke="#222" stroke-width="1.4"/></svg><div style="position:absolute;left:1663px;top:103px;width:257px;height:613px;background:#ffffff;border:1px solid #8a8a8a;border-right:none"></div><svg style="position:absolute;left:1669px;top:109px" width="15" height="14" viewBox="0 0 15 14"><path d="M0.5 1 H5.5 L6.8 2.2 H14 V12 H0.5 Z" fill="#f5ac00"/><path d="M2 7.5 L11 2 V13.5 Z" fill="#5a0dff"/><path d="M5.5 7 L8 5.8 M6 9 L8.5 7.8" stroke="#d9c8ff" stroke-width="0.9"/></svg><div style="position:absolute;left:1690px;top:108px;font-size:11.45px;line-height:16px;color:#000;font-weight:bold;white-space:pre;font-family:'Liberation Sans', sans-serif;">sample_inspect_c-2025_3</div><svg style="position:absolute;left:1669px;top:129px" width="15" height="14" viewBox="0 0 15 14"><path d="M0.5 1 H5.5 L6.8 2.2 H14 V12 H0.5 Z" fill="#f5ac00"/><path d="M2 7.5 L11 2 V13.5 Z" fill="#5a0dff"/><path d="M5.5 7 L8 5.8 M6 9 L8.5 7.8" stroke="#d9c8ff" stroke-width="0.9"/></svg><div style="position:absolute;left:1690px;top:128px;font-size:10.75px;line-height:16px;color:#000;white-space:pre;font-family:'Liberation Sans', sans-serif;">ASCM_Examples-4_9_0</div><svg style="position:absolute;left:1669px;top:149px" width="15" height="14" viewBox="0 0 15 14"><path d="M0.5 1 H5.5 L6.8 2.2 H14 V12 H0.5 Z" fill="#f5ac00"/><path d="M2 7.5 L11 2 V13.5 Z" fill="#5a0dff"/><path d="M5.5 7 L8 5.8 M6 9 L8.5 7.8" stroke="#d9c8ff" stroke-width="0.9"/></svg><div style="position:absolute;left:1690px;top:148px;font-size:10.75px;line-height:16px;color:#000;white-space:pre;font-family:'Liberation Sans', sans-serif;">CERTCCM_Examples-3_7_0</div><svg style="position:absolute;left:1669px;top:169px" width="15" height="14" viewBox="0 0 15 14"><path d="M0.5 1 H5.5 L6.8 2.2 H14 V12 H0.5 Z" fill="#f5ac00"/><path d="M2 7.5 L11 2 V13.5 Z" fill="#5a0dff"/><path d="M5.5 7 L8 5.8 M6 9 L8.5 7.8" stroke="#d9c8ff" stroke-width="0.9"/></svg><div style="position:absolute;left:1690px;top:168px;font-size:10.75px;line-height:16px;color:#000;white-space:pre;font-family:'Liberation Sans', sans-serif;">CERTCCM_Examples-3_8_0</div><svg style="position:absolute;left:1669px;top:189px" width="15" height="14" viewBox="0 0 15 14"><path d="M0.5 1 H5.5 L6.8 2.2 H14 V12 H0.5 Z" fill="#f5ac00"/><path d="M2 7.5 L11 2 V13.5 Z" fill="#5a0dff"/><path d="M5.5 7 L8 5.8 M6 9 L8.5 7.8" stroke="#d9c8ff" stroke-width="0.9"/></svg><div style="position:absolute;left:1690px;top:188px;font-size:10.75px;line-height:16px;color:#000;white-space:pre;font-family:'Liberation Sans', sans-serif;">CERTCCM_Examples-4_0_0</div><svg style="position:absolute;left:1669px;top:209px" width="15" height="14" viewBox="0 0 15 14"><path d="M0.5 1 H5.5 L6.8 2.2 H14 V12 H0.5 Z" fill="#f5ac00"/><path d="M2 7.5 L11 2 V13.5 Z" fill="#5a0dff"/><path d="M5.5 7 L8 5.8 M6 9 L8.5 7.8" stroke="#d9c8ff" stroke-width="0.9"/></svg><div style="position:absolute;left:1690px;top:208px;font-size:10.75px;line-height:16px;color:#000;white-space:pre;font-family:'Liberation Sans', sans-serif;">CERTCCM_Examples-4_1_0</div><svg style="position:absolute;left:1669px;top:229px" width="15" height="14" viewBox="0 0 15 14"><path d="M0.5 1 H5.5 L6.8 2.2 H14 V12 H0.5 Z" fill="#f5ac00"/><path d="M2 7.5 L11 2 V13.5 Z" fill="#5a0dff"/><path d="M5.5 7 L8 5.8 M6 9 L8.5 7.8" stroke="#d9c8ff" stroke-width="0.9"/></svg><div style="position:absolute;left:1690px;top:228px;font-size:10.75px;line-height:16px;color:#000;white-space:pre;font-family:'Liberation Sans', sans-serif;">CERTCCM_Examples-4_2_0</div><svg style="position:absolute;left:1669px;top:249px" width="15" height="14" viewBox="0 0 15 14"><path d="M0.5 1 H5.5 L6.8 2.2 H14 V12 H0.5 Z" fill="#f5ac00"/><path d="M2 7.5 L11 2 V13.5 Z" fill="#5a0dff"/><path d="M5.5 7 L8 5.8 M6 9 L8.5 7.8" stroke="#d9c8ff" stroke-width="0.9"/></svg><div style="position:absolute;left:1690px;top:248px;font-size:10.75px;line-height:16px;color:#000;white-space:pre;font-family:'Liberation Sans', sans-serif;">CWECCM_Examples-3_9_0</div><svg style="position:absolute;left:1669px;top:269px" width="15" height="14" viewBox="0 0 15 14"><path d="M0.5 1 H5.5 L6.8 2.2 H14 V12 H0.5 Z" fill="#f5ac00"/><path d="M2 7.5 L11 2 V13.5 Z" fill="#5a0dff"/><path d="M5.5 7 L8 5.8 M6 9 L8.5 7.8" stroke="#d9c8ff" stroke-width="0.9"/></svg><div style="position:absolute;left:1690px;top:268px;font-size:10.75px;line-height:16px;color:#000;white-space:pre;font-family:'Liberation Sans', sans-serif;">M2CPP_Examples-2_0_0</div><svg style="position:absolute;left:1669px;top:289px" width="15" height="14" viewBox="0 0 15 14"><path d="M0.5 1 H5.5 L6.8 2.2 H14 V12 H0.5 Z" fill="#f5ac00"/><path d="M2 7.5 L11 2 V13.5 Z" fill="#5a0dff"/><path d="M5.5 7 L8 5.8 M6 9 L8.5 7.8" stroke="#d9c8ff" stroke-width="0.9"/></svg><div style="position:absolute;left:1690px;top:288px;font-size:10.75px;line-height:16px;color:#000;white-space:pre;font-family:'Liberation Sans', sans-serif;">M2CPP_Examples-2_1_0</div><svg style="position:absolute;left:1669px;top:309px" width="15" height="14" viewBox="0 0 15 14"><path d="M0.5 1 H5.5 L6.8 2.2 H14 V12 H0.5 Z" fill="#f5ac00"/><path d="M2 7.5 L11 2 V13.5 Z" fill="#5a0dff"/><path d="M5.5 7 L8 5.8 M6 9 L8.5 7.8" stroke="#d9c8ff" stroke-width="0.9"/></svg><div style="position:absolute;left:1690px;top:308px;font-size:10.75px;line-height:16px;color:#000;white-space:pre;font-family:'Liberation Sans', sans-serif;">M3CM_Examples-3_3_0</div><svg style="position:absolute;left:1669px;top:329px" width="15" height="14" viewBox="0 0 15 14"><path d="M0.5 1 H5.5 L6.8 2.2 H14 V12 H0.5 Z" fill="#f5ac00"/><path d="M2 7.5 L11 2 V13.5 Z" fill="#5a0dff"/><path d="M5.5 7 L8 5.8 M6 9 L8.5 7.8" stroke="#d9c8ff" stroke-width="0.9"/></svg><div style="position:absolute;left:1690px;top:328px;font-size:10.75px;line-height:16px;color:#000;white-space:pre;font-family:'Liberation Sans', sans-serif;">M3CM_Examples-5_7_0</div><svg style="position:absolute;left:1669px;top:349px" width="15" height="14" viewBox="0 0 15 14"><path d="M0.5 1 H5.5 L6.8 2.2 H14 V12 H0.5 Z" fill="#f5ac00"/><path d="M2 7.5 L11 2 V13.5 Z" fill="#5a0dff"/><path d="M5.5 7 L8 5.8 M6 9 L8.5 7.8" stroke="#d9c8ff" stroke-width="0.9"/></svg><div style="position:absolute;left:1690px;top:348px;font-size:10.75px;line-height:16px;color:#000;white-space:pre;font-family:'Liberation Sans', sans-serif;">M3CM_Examples-5_8_0</div><svg style="position:absolute;left:1669px;top:369px" width="15" height="14" viewBox="0 0 15 14"><path d="M0.5 1 H5.5 L6.8 2.2 H14 V12 H0.5 Z" fill="#f5ac00"/><path d="M2 7.5 L11 2 V13.5 Z" fill="#5a0dff"/><path d="M5.5 7 L8 5.8 M6 9 L8.5 7.8" stroke="#d9c8ff" stroke-width="0.9"/></svg><div style="position:absolute;left:1690px;top:368px;font-size:10.75px;line-height:16px;color:#000;white-space:pre;font-family:'Liberation Sans', sans-serif;">M3CM_Examples-6_0_0</div><svg style="position:absolute;left:1669px;top:389px" width="15" height="14" viewBox="0 0 15 14"><path d="M0.5 1 H5.5 L6.8 2.2 H14 V12 H0.5 Z" fill="#f5ac00"/><path d="M2 7.5 L11 2 V13.5 Z" fill="#5a0dff"/><path d="M5.5 7 L8 5.8 M6 9 L8.5 7.8" stroke="#d9c8ff" stroke-width="0.9"/></svg><div style="position:absolute;left:1690px;top:388px;font-size:10.75px;line-height:16px;color:#000;white-space:pre;font-family:'Liberation Sans', sans-serif;">M3CM_Examples-6_1_0</div><svg style="position:absolute;left:1669px;top:409px" width="15" height="14" viewBox="0 0 15 14"><path d="M0.5 1 H5.5 L6.8 2.2 H14 V12 H0.5 Z" fill="#f5ac00"/><path d="M2 7.5 L11 2 V13.5 Z" fill="#5a0dff"/><path d="M5.5 7 L8 5.8 M6 9 L8.5 7.8" stroke="#d9c8ff" stroke-width="0.9"/></svg><div style="position:absolute;left:1690px;top:408px;font-size:10.75px;line-height:16px;color:#000;white-space:pre;font-family:'Liberation Sans', sans-serif;">M3CM_Examples-6_2_0</div><svg style="position:absolute;left:1669px;top:429px" width="15" height="14" viewBox="0 0 15 14"><path d="M0.5 1 H5.5 L6.8 2.2 H14 V12 H0.5 Z" fill="#f5ac00"/><path d="M2 7.5 L11 2 V13.5 Z" fill="#5a0dff"/><path d="M5.5 7 L8 5.8 M6 9 L8.5 7.8" stroke="#d9c8ff" stroke-width="0.9"/></svg><div style="position:absolute;left:1690px;top:428px;font-size:10.75px;line-height:16px;color:#000;white-space:pre;font-family:'Liberation Sans', sans-serif;">MC25CM_Examples-1_0_0</div><svg style="position:absolute;left:1669px;top:449px" width="15" height="14" viewBox="0 0 15 14"><path d="M0.5 1 H5.5 L6.8 2.2 H14 V12 H0.5 Z" fill="#f5ac00"/><path d="M2 7.5 L11 2 V13.5 Z" fill="#5a0dff"/><path d="M5.5 7 L8 5.8 M6 9 L8.5 7.8" stroke="#d9c8ff" stroke-width="0.9"/></svg><div style="position:absolute;left:1690px;top:448px;font-size:10.75px;line-height:16px;color:#000;white-space:pre;font-family:'Liberation Sans', sans-serif;">MC25CM_Examples-1_2_0</div><svg style="position:absolute;left:1669px;top:469px" width="15" height="14" viewBox="0 0 15 14"><path d="M0.5 1 H5.5 L6.8 2.2 H14 V12 H0.5 Z" fill="#f5ac00"/><path d="M2 7.5 L11 2 V13.5 Z" fill="#5a0dff"/><path d="M5.5 7 L8 5.8 M6 9 L8.5 7.8" stroke="#d9c8ff" stroke-width="0.9"/></svg><div style="position:absolute;left:1690px;top:468px;font-size:10.75px;line-height:16px;color:#000;white-space:pre;font-family:'Liberation Sans', sans-serif;">MCPP_Examples-3_7_0</div><svg style="position:absolute;left:1669px;top:489px" width="15" height="14" viewBox="0 0 15 14"><path d="M0.5 1 H5.5 L6.8 2.2 H14 V12 H0.5 Z" fill="#f5ac00"/><path d="M2 7.5 L11 2 V13.5 Z" fill="#5a0dff"/><path d="M5.5 7 L8 5.8 M6 9 L8.5 7.8" stroke="#d9c8ff" stroke-width="0.9"/></svg><div style="position:absolute;left:1690px;top:488px;font-size:10.75px;line-height:16px;color:#000;white-space:pre;font-family:'Liberation Sans', sans-serif;">MCPP_Examples-4_0_0</div><div style="position:absolute;left:1768px;top:547px;width:60px;height:60px;border-radius:50%;background:#ec1c24;color:#fff;font:44px/58px 'Liberation Sans',sans-serif;text-align:center"><div style="transform:scaleX(0.86)">3</div></div><div style="position:absolute;left:0px;top:720px;width:1920px;height:312px;background:#f0f0f0;"></div><div style="position:absolute;left:0px;top:720px;width:1920px;height:21px;background:#dadada;border:1px solid #c0c0c0"></div><div style="position:absolute;left:5px;top:724px;font-size:11.6px;line-height:15px;color:#000;white-space:pre;font-family:'Liberation Sans', sans-serif;">Analysis Results/Diagnostics</div><svg style="position:absolute;left:1882px;top:725px" width="10" height="10" viewBox="0 0 10 10"><rect x="0.5" y="3.5" width="6" height="6" fill="none" stroke="#222"/><path d="M3.5 3.5 V0.5 H9.5 V6.5 H6.5" fill="none" stroke="#222"/><rect x="0.5" y="3.5" width="6" height="1.5" fill="#222"/><rect x="3.5" y="0.5" width="6" height="1.5" fill="#222"/></svg><svg style="position:absolute;left:1902px;top:725px" width="10" height="10" viewBox="0 0 10 10"><path d="M1 1 L9 9 M9 1 L1 9" stroke="#222" stroke-width="1.4"/></svg><div style="position:absolute;left:3px;top:754px;width:30px;height:29px;background:#cce4f7;border:1px solid #99c9f3;border-radius:3px"></div><div style="position:absolute;left:11px;top:762px;transform:scale(1.2);transform-origin:0 0"><svg style="position:absolute;left:0px;top:0px" width="15" height="15" viewBox="0 0 15 15"><g transform="translate(0,0)"><path d="M7.1 2 C10.3 2 12.2 4.2 12.2 6.9 C12.2 8.8 11.2 10 10.2 10.6 L10.6 13.2 L8 11.6 C4 12 1.9 9.6 1.9 6.9 C1.9 4.2 3.9 2 7.1 2 Z" fill="#f26a4a"/><rect x="6.1" y="4" width="2" height="4.2" fill="#111"/><rect x="6.1" y="9.1" width="2" height="1.9" fill="#111"/></g></svg></div><div style="position:absolute;left:34px;top:754px;width:30px;height:29px;background:#cce4f7;border:1px solid #99c9f3;border-radius:3px"></div><div style="position:absolute;left:42px;top:762px;transform:scale(1.2);transform-origin:0 0"><svg style="position:absolute;left:0px;top:0px" width="15" height="15" viewBox="0 0 15 15"><g transform="translate(0,0)"><path d="M7.1 2 C10.3 2 12.2 4.2 12.2 6.9 C12.2 8.8 11.2 10 10.2 10.6 L10.6 13.2 L8 11.6 C4 12 1.9 9.6 1.9 6.9 C1.9 4.2 3.9 2 7.1 2 Z" fill="#fbd030"/><rect x="6.1" y="4" width="2" height="4.2" fill="#111"/><rect x="6.1" y="9.1" width="2" height="1.9" fill="#111"/></g></svg></div><div style="position:absolute;left:65px;top:754px;width:30px;height:29px;background:#cce4f7;border:1px solid #99c9f3;border-radius:3px"></div><div style="position:absolute;left:73px;top:762px;transform:scale(1.2);transform-origin:0 0"><svg style="position:absolute;left:0px;top:0px" width="15" height="15" viewBox="0 0 15 15"><g transform="translate(0,0)"><path d="M7.1 2 C10.3 2 12.2 4.2 12.2 6.9 C12.2 8.8 11.2 10 10.2 10.6 L10.6 13.2 L8 11.6 C4 12 1.9 9.6 1.9 6.9 C1.9 4.2 3.9 2 7.1 2 Z" fill="#5cbf2a"/><rect x="6.1" y="4" width="2" height="4.2" fill="#111"/><rect x="6.1" y="9.1" width="2" height="1.9" fill="#111"/></g></svg></div><div style="position:absolute;left:96px;top:754px;width:30px;height:29px;background:#cce4f7;border:1px solid #99c9f3;border-radius:3px"></div><div style="position:absolute;left:104px;top:762px;transform:scale(1.2);transform-origin:0 0"><svg style="position:absolute;left:0px;top:0px" width="15" height="15" viewBox="0 0 15 15"><g transform="translate(0,0)"><path d="M7.1 2 C10.3 2 12.2 4.2 12.2 6.9 C12.2 8.8 11.2 10 10.2 10.6 L10.6 13.2 L8 11.6 C4 12 1.9 9.6 1.9 6.9 C1.9 4.2 3.9 2 7.1 2 Z" fill="#3aa8d8"/><rect x="6.1" y="4" width="2" height="4.2" fill="#111"/><rect x="6.1" y="9.1" width="2" height="1.9" fill="#111"/></g></svg></div><div style="position:absolute;left:129px;top:750px;width:1px;height:39px;background:#d8d8d8;"></div><div style="position:absolute;left:133px;top:754px;width:30px;height:29px;background:#cce4f7;border:1px solid #99c9f3;border-radius:3px"></div><svg style="position:absolute;left:141px;top:762px" width="15" height="15" viewBox="0 0 15 15"><path d="M6.5 2.5 C10 2.5 12.5 4.5 12.5 7 C12.5 9 11 10.3 9.8 10.8 L10.5 13.5 L7.5 11.3 C3.5 11.5 1 9.5 1 7 C1 4.5 3.3 2.5 6.5 2.5 Z" fill="#c6c6c6" stroke="#9a9a9a" stroke-width="0.6"/><text x="6.8" y="9.6" font-size="6.5" text-anchor="middle" fill="#333" font-family="Liberation Sans">2</text></svg><svg style="position:absolute;left:172px;top:759px" width="14" height="20" viewBox="0 0 14 20"><path d="M1.5 6.5 L7 1.5 L12.5 6.5 M1.5 13 L7 18 L12.5 13" fill="none" stroke="#222" stroke-width="1.5"/></svg><div style="position:absolute;left:197px;top:750px;width:1px;height:39px;background:#d8d8d8;"></div><svg style="position:absolute;left:208px;top:762px" width="24" height="18" viewBox="0 0 24 18"><path d="M2 2.5 H10 M2 5 H10 M2 7.5 H10 M2 10 H10" stroke="#444" stroke-width="1"/><path d="M14 14.5 H19 L16.5 17 Z" fill="#222"/></svg><div style="position:absolute;left:234px;top:750px;width:1px;height:39px;background:#d8d8d8;"></div><div style="position:absolute;left:247px;top:763px;font-size:11.5px;line-height:15px;color:#000;white-space:pre;font-family:'Liberation Sans', sans-serif;">Severity Filter:</div><div style="position:absolute;left:333px;top:763px;font-size:11.6px;line-height:15px;color:#000;white-space:pre;font-family:'Liberation Sans', sans-serif;">0</div><div style="position:absolute;left:358px;top:763px;width:145px;height:4px;background:#e6e6e6;border:1px solid #d6d6d6;border-radius:2px"></div><svg style="position:absolute;left:352px;top:755px" width="12" height="21" viewBox="0 0 12 21"><path d="M0.5 1.5 Q0.5 0.5 1.5 0.5 H10.5 Q11.5 0.5 11.5 1.5 V14.5 L6 20 L0.5 14.5 Z" fill="#0078d7"/></svg><svg style="position:absolute;left:358px;top:776px" width="142" height="5" viewBox="0 0 142 5"><rect x="0.5" y="0" width="1" height="4" fill="#a0a0a0"/><rect x="15.9" y="0" width="1" height="4" fill="#a0a0a0"/><rect x="31.4" y="0" width="1" height="4" fill="#a0a0a0"/><rect x="46.8" y="0" width="1" height="4" fill="#a0a0a0"/><rect x="62.3" y="0" width="1" height="4" fill="#a0a0a0"/><rect x="77.8" y="0" width="1" height="4" fill="#a0a0a0"/><rect x="93.2" y="0" width="1" height="4" fill="#a0a0a0"/><rect x="108.6" y="0" width="1" height="4" fill="#a0a0a0"/><rect x="124.1" y="0" width="1" height="4" fill="#a0a0a0"/><rect x="139.5" y="0" width="1" height="4" fill="#a0a0a0"/></svg><div style="position:absolute;left:514px;top:763px;font-size:11.6px;line-height:15px;color:#000;white-space:pre;font-family:'Liberation Sans', sans-serif;">9</div><svg style="position:absolute;left:1538px;top:762px" width="14" height="14" viewBox="0 0 14 14"><path d="M1.5 1 V13" stroke="#333" stroke-width="1.3"/><path d="M11 1.5 L5 7 L11 12.5" fill="none" stroke="#333" stroke-width="1.3"/></svg><svg style="position:absolute;left:1571px;top:762px" width="12" height="14" viewBox="0 0 12 14"><path d="M9 1.5 L3 7 L9 12.5" fill="none" stroke="#333" stroke-width="1.3"/></svg><svg style="position:absolute;left:1602px;top:762px" width="12" height="14" viewBox="0 0 12 14"><path d="M3 1.5 L9 7 L3 12.5" fill="none" stroke="#333" stroke-width="1.3"/></svg><svg style="position:absolute;left:1632px;top:762px" width="14" height="14" viewBox="0 0 14 14"><path d="M2 1.5 L8 7 L2 12.5" fill="none" stroke="#333" stroke-width="1.3"/><path d="M11.5 1 V13" stroke="#333" stroke-width="1.6"/></svg><div style="position:absolute;left:1655px;top:763px;font-size:12px;line-height:15px;color:#000;font-weight:bold;white-space:pre;font-family:'Liberation Sans', sans-serif;letter-spacing:0.3px">Page</div><div style="position:absolute;left:1690px;top:759px;width:58px;height:21px;background:#ffffff;border-bottom:1px solid #8a8a8a;border-radius:2px"></div><div style="position:absolute;left:1693px;top:762px;font-size:11.6px;line-height:15px;color:#333;white-space:pre;font-family:'Liberation Sans', sans-serif;">1</div><div style="position:absolute;left:1752px;top:763px;font-size:12px;line-height:15px;color:#000;font-weight:bold;white-space:pre;font-family:'Liberation Sans', sans-serif;letter-spacing:0.42px">/ 2 pages [118 diagnostics]</div><div style="position:absolute;left:0px;top:794px;width:1920px;height:192px;background:#fff;border:1px solid #8a8a8a;overflow:hidden"><div style="position:absolute;left:42px;top:1px;width:1px;height:23px;background:#e5e5e5;"></div><div style="position:absolute;left:172px;top:1px;width:1px;height:23px;background:#e5e5e5;"></div><div style="position:absolute;left:232px;top:1px;width:1px;height:23px;background:#e5e5e5;"></div><div style="position:absolute;left:382px;top:1px;width:1px;height:23px;background:#e5e5e5;"></div><div style="position:absolute;left:1152px;top:1px;width:1px;height:23px;background:#e5e5e5;"></div><div style="position:absolute;left:1392px;top:1px;width:1px;height:23px;background:#e5e5e5;"></div><div style="position:absolute;left:1452px;top:1px;width:1px;height:23px;background:#e5e5e5;"></div><div style="position:absolute;left:1512px;top:1px;width:1px;height:23px;background:#e5e5e5;"></div><div style="position:absolute;left:1732px;top:1px;width:1px;height:23px;background:#e5e5e5;"></div><div style="position:absolute;left:47px;top:4px;font-size:11.6px;line-height:15px;color:#000;white-space:pre;font-family:'Liberation Sans', sans-serif;">ID</div><div style="position:absolute;left:177px;top:4px;font-size:11.6px;line-height:15px;color:#000;white-space:pre;font-family:'Liberation Sans', sans-serif;">Severity</div><div style="position:absolute;left:237px;top:4px;font-size:11.6px;line-height:15px;color:#000;white-space:pre;font-family:'Liberation Sans', sans-serif;">Rule</div><div style="position:absolute;left:387px;top:4px;font-size:11.6px;line-height:15px;color:#000;white-space:pre;font-family:'Liberation Sans', sans-serif;">Message</div><div style="position:absolute;left:1157px;top:4px;font-size:11.6px;line-height:15px;color:#000;white-space:pre;font-family:'Liberation Sans', sans-serif;">File</div><div style="position:absolute;left:1397px;top:4px;font-size:11.6px;line-height:15px;color:#000;white-space:pre;font-family:'Liberation Sans', sans-serif;">Line</div><div style="position:absolute;left:1457px;top:4px;font-size:11.6px;line-height:15px;color:#000;white-space:pre;font-family:'Liberation Sans', sans-serif;">Column</div><div style="position:absolute;left:1517px;top:4px;font-size:11.6px;line-height:15px;color:#000;white-space:pre;font-family:'Liberation Sans', sans-serif;">Message Group</div><div style="position:absolute;left:1901px;top:0px;width:18px;height:192px;background:#f0f0f0;"></div><div style="position:absolute;left:1908px;top:35px;width:2px;height:18px;background:#8a8a8a;"></div><div style="position:absolute;left:24px;top:24px;transform:scale(1.2);transform-origin:0 0"><svg style="position:absolute;left:0px;top:0px" width="15" height="15" viewBox="0 0 15 15"><g transform="translate(0,0)"><path d="M7.1 2 C10.3 2 12.2 4.2 12.2 6.9 C12.2 8.8 11.2 10 10.2 10.6 L10.6 13.2 L8 11.6 C4 12 1.9 9.6 1.9 6.9 C1.9 4.2 3.9 2 7.1 2 Z" fill="#fbd030"/><rect x="6.1" y="4" width="2" height="4.2" fill="#111"/><rect x="6.1" y="9.1" width="2" height="1.9" fill="#111"/></g></svg></div><div style="position:absolute;left:46px;top:26px;font-size:11.65px;line-height:16px;white-space:pre;color:#0000ff;text-decoration:underline">qac-12.2.0-3447</div><div style="position:absolute;left:176px;top:26px;font-size:11.6px;line-height:16px;color:#000;white-space:pre;font-family:'Liberation Sans', sans-serif;">2</div><div style="position:absolute;left:237px;top:26px;font-size:11.2px;line-height:16px;white-space:pre;color:#0000ff;text-decoration:underline">QAC 2.16</div><div style="position:absolute;left:387px;top:26px;font-size:12px;line-height:16px;color:#000;white-space:pre;font-family:'Liberation Sans', sans-serif;">'audit' is being declared with external linkage but this declaration is not in a header file.</div><div style="position:absolute;left:1157px;top:26px;font-size:11.65px;line-height:16px;color:#000;white-space:pre;font-family:'Liberation Sans', sans-serif;">inspect.c</div><div style="position:absolute;left:1397px;top:26px;font-size:11.6px;line-height:16px;color:#000;white-space:pre;font-family:'Liberation Sans', sans-serif;">9</div><div style="position:absolute;left:1457px;top:26px;font-size:11.6px;line-height:16px;color:#000;white-space:pre;font-family:'Liberation Sans', sans-serif;">17</div><div style="position:absolute;left:1517px;top:26px;font-size:11.6px;line-height:16px;color:#000;white-space:pre;font-family:'Liberation Sans', sans-serif;">QAC</div><div style="position:absolute;left:24px;top:44px;transform:scale(1.2);transform-origin:0 0"><svg style="position:absolute;left:0px;top:0px" width="15" height="15" viewBox="0 0 15 15"><g transform="translate(0,0)"><path d="M7.1 2 C10.3 2 12.2 4.2 12.2 6.9 C12.2 8.8 11.2 10 10.2 10.6 L10.6 13.2 L8 11.6 C4 12 1.9 9.6 1.9 6.9 C1.9 4.2 3.9 2 7.1 2 Z" fill="#fbd030"/><rect x="6.1" y="4" width="2" height="4.2" fill="#111"/><rect x="6.1" y="9.1" width="2" height="1.9" fill="#111"/></g></svg></div><div style="position:absolute;left:46px;top:46px;font-size:11.65px;line-height:16px;white-space:pre;color:#0000ff;text-decoration:underline">qac-12.2.0-3625</div><div style="position:absolute;left:176px;top:46px;font-size:11.6px;line-height:16px;color:#000;white-space:pre;font-family:'Liberation Sans', sans-serif;">2</div><div style="position:absolute;left:237px;top:46px;font-size:11.2px;line-height:16px;white-space:pre;color:#0000ff;text-decoration:underline">QAC 2.16</div><div style="position:absolute;left:387px;top:46px;font-size:12px;line-height:16px;color:#000;white-space:pre;font-family:'Liberation Sans', sans-serif;">Type 'char' has been used in the declaration of an object or a function.</div><div style="position:absolute;left:1157px;top:46px;font-size:11.65px;line-height:16px;color:#000;white-space:pre;font-family:'Liberation Sans', sans-serif;">inspect.c</div><div style="position:absolute;left:1397px;top:46px;font-size:11.6px;line-height:16px;color:#000;white-space:pre;font-family:'Liberation Sans', sans-serif;">9</div><div style="position:absolute;left:1457px;top:46px;font-size:11.6px;line-height:16px;color:#000;white-space:pre;font-family:'Liberation Sans', sans-serif;">29</div><div style="position:absolute;left:1517px;top:46px;font-size:11.6px;line-height:16px;color:#000;white-space:pre;font-family:'Liberation Sans', sans-serif;">QAC</div><div style="position:absolute;left:24px;top:64px;transform:scale(1.2);transform-origin:0 0"><svg style="position:absolute;left:0px;top:0px" width="15" height="15" viewBox="0 0 15 15"><g transform="translate(0,0)"><path d="M7.1 2 C10.3 2 12.2 4.2 12.2 6.9 C12.2 8.8 11.2 10 10.2 10.6 L10.6 13.2 L8 11.6 C4 12 1.9 9.6 1.9 6.9 C1.9 4.2 3.9 2 7.1 2 Z" fill="#fbd030"/><rect x="6.1" y="4" width="2" height="4.2" fill="#111"/><rect x="6.1" y="9.1" width="2" height="1.9" fill="#111"/></g></svg></div><div style="position:absolute;left:46px;top:66px;font-size:11.65px;line-height:16px;white-space:pre;color:#0000ff;text-decoration:underline">qac-12.2.0-3447</div><div style="position:absolute;left:176px;top:66px;font-size:11.6px;line-height:16px;color:#000;white-space:pre;font-family:'Liberation Sans', sans-serif;">2</div><div style="position:absolute;left:237px;top:66px;font-size:11.2px;line-height:16px;white-space:pre;color:#0000ff;text-decoration:underline">QAC 2.16</div><div style="position:absolute;left:387px;top:66px;font-size:12px;line-height:16px;color:#000;white-space:pre;font-family:'Liberation Sans', sans-serif;">'openDb' is being declared with external linkage but this declaration is not in a header file.</div><div style="position:absolute;left:1157px;top:66px;font-size:11.65px;line-height:16px;color:#000;white-space:pre;font-family:'Liberation Sans', sans-serif;">inspect.c</div><div style="position:absolute;left:1397px;top:66px;font-size:11.6px;line-height:16px;color:#000;white-space:pre;font-family:'Liberation Sans', sans-serif;">11</div><div style="position:absolute;left:1457px;top:66px;font-size:11.6px;line-height:16px;color:#000;white-space:pre;font-family:'Liberation Sans', sans-serif;">25</div><div style="position:absolute;left:1517px;top:66px;font-size:11.6px;line-height:16px;color:#000;white-space:pre;font-family:'Liberation Sans', sans-serif;">QAC</div><div style="position:absolute;left:21px;top:84px;width:1712px;height:20px;background:#cce8ff;border:1px solid #111"></div><div style="position:absolute;left:24px;top:84px;transform:scale(1.2);transform-origin:0 0"><svg style="position:absolute;left:0px;top:0px" width="15" height="15" viewBox="0 0 15 15"><g transform="translate(0,0)"><path d="M7.1 2 C10.3 2 12.2 4.2 12.2 6.9 C12.2 8.8 11.2 10 10.2 10.6 L10.6 13.2 L8 11.6 C4 12 1.9 9.6 1.9 6.9 C1.9 4.2 3.9 2 7.1 2 Z" fill="#b4ae68"/><rect x="6.1" y="4" width="2" height="4.2" fill="#111"/><rect x="6.1" y="9.1" width="2" height="1.9" fill="#111"/></g></svg></div><div style="position:absolute;left:46px;top:86px;font-size:11.65px;line-height:16px;white-space:pre;color:#0000ff;text-decoration:underline">qac-12.2.0-3447</div><div style="position:absolute;left:176px;top:86px;font-size:11.6px;line-height:16px;color:#000;white-space:pre;font-family:'Liberation Sans', sans-serif;">2</div><div style="position:absolute;left:237px;top:86px;font-size:11.2px;line-height:16px;white-space:pre;color:#0000ff;text-decoration:underline">QAC 2.16</div><div style="position:absolute;left:387px;top:86px;font-size:12px;line-height:16px;color:#000;white-space:pre;font-family:'Liberation Sans', sans-serif;">'initDb' is being declared with external linkage but this declaration is not in a header file.</div><div style="position:absolute;left:1157px;top:86px;font-size:11.65px;line-height:16px;color:#000;white-space:pre;font-family:'Liberation Sans', sans-serif;">inspect.c</div><div style="position:absolute;left:1397px;top:86px;font-size:11.6px;line-height:16px;color:#000;white-space:pre;font-family:'Liberation Sans', sans-serif;">12</div><div style="position:absolute;left:1457px;top:86px;font-size:11.6px;line-height:16px;color:#000;white-space:pre;font-family:'Liberation Sans', sans-serif;">25</div><div style="position:absolute;left:1517px;top:86px;font-size:11.6px;line-height:16px;color:#000;white-space:pre;font-family:'Liberation Sans', sans-serif;">QAC</div><div style="position:absolute;left:24px;top:104px;transform:scale(1.2);transform-origin:0 0"><svg style="position:absolute;left:0px;top:0px" width="15" height="15" viewBox="0 0 15 15"><g transform="translate(0,0)"><path d="M7.1 2 C10.3 2 12.2 4.2 12.2 6.9 C12.2 8.8 11.2 10 10.2 10.6 L10.6 13.2 L8 11.6 C4 12 1.9 9.6 1.9 6.9 C1.9 4.2 3.9 2 7.1 2 Z" fill="#fbd030"/><rect x="6.1" y="4" width="2" height="4.2" fill="#111"/><rect x="6.1" y="9.1" width="2" height="1.9" fill="#111"/></g></svg></div><div style="position:absolute;left:46px;top:106px;font-size:11.65px;line-height:16px;white-space:pre;color:#0000ff;text-decoration:underline">qac-12.2.0-3447</div><div style="position:absolute;left:176px;top:106px;font-size:11.6px;line-height:16px;color:#000;white-space:pre;font-family:'Liberation Sans', sans-serif;">2</div><div style="position:absolute;left:237px;top:106px;font-size:11.2px;line-height:16px;white-space:pre;color:#0000ff;text-decoration:underline">QAC 2.16</div><div style="position:absolute;left:387px;top:106px;font-size:12px;line-height:16px;color:#000;white-space:pre;font-family:'Liberation Sans', sans-serif;">'getAppName' is being declared with external linkage but this declaration is not in a header file.</div><div style="position:absolute;left:1157px;top:106px;font-size:11.65px;line-height:16px;color:#000;white-space:pre;font-family:'Liberation Sans', sans-serif;">inspect.c</div><div style="position:absolute;left:1397px;top:106px;font-size:11.6px;line-height:16px;color:#000;white-space:pre;font-family:'Liberation Sans', sans-serif;">13</div><div style="position:absolute;left:1457px;top:106px;font-size:11.6px;line-height:16px;color:#000;white-space:pre;font-family:'Liberation Sans', sans-serif;">25</div><div style="position:absolute;left:1517px;top:106px;font-size:11.6px;line-height:16px;color:#000;white-space:pre;font-family:'Liberation Sans', sans-serif;">QAC</div><div style="position:absolute;left:24px;top:124px;transform:scale(1.2);transform-origin:0 0"><svg style="position:absolute;left:0px;top:0px" width="15" height="15" viewBox="0 0 15 15"><g transform="translate(0,0)"><path d="M7.1 2 C10.3 2 12.2 4.2 12.2 6.9 C12.2 8.8 11.2 10 10.2 10.6 L10.6 13.2 L8 11.6 C4 12 1.9 9.6 1.9 6.9 C1.9 4.2 3.9 2 7.1 2 Z" fill="#fbd030"/><rect x="6.1" y="4" width="2" height="4.2" fill="#111"/><rect x="6.1" y="9.1" width="2" height="1.9" fill="#111"/></g></svg></div><div style="position:absolute;left:46px;top:126px;font-size:11.65px;line-height:16px;white-space:pre;color:#0000ff;text-decoration:underline">qac-12.2.0-3625</div><div style="position:absolute;left:176px;top:126px;font-size:11.6px;line-height:16px;color:#000;white-space:pre;font-family:'Liberation Sans', sans-serif;">2</div><div style="position:absolute;left:237px;top:126px;font-size:11.2px;line-height:16px;white-space:pre;color:#0000ff;text-decoration:underline">QAC 2.16</div><div style="position:absolute;left:387px;top:126px;font-size:12px;line-height:16px;color:#000;white-space:pre;font-family:'Liberation Sans', sans-serif;">Type 'char' has been used in the declaration of an object or a function.</div><div style="position:absolute;left:1157px;top:126px;font-size:11.65px;line-height:16px;color:#000;white-space:pre;font-family:'Liberation Sans', sans-serif;">inspect.c</div><div style="position:absolute;left:1397px;top:126px;font-size:11.6px;line-height:16px;color:#000;white-space:pre;font-family:'Liberation Sans', sans-serif;">13</div><div style="position:absolute;left:1457px;top:126px;font-size:11.6px;line-height:16px;color:#000;white-space:pre;font-family:'Liberation Sans', sans-serif;">25</div><div style="position:absolute;left:1517px;top:126px;font-size:11.6px;line-height:16px;color:#000;white-space:pre;font-family:'Liberation Sans', sans-serif;">QAC</div><div style="position:absolute;left:24px;top:144px;transform:scale(1.2);transform-origin:0 0"><svg style="position:absolute;left:0px;top:0px" width="15" height="15" viewBox="0 0 15 15"><g transform="translate(0,0)"><path d="M7.1 2 C10.3 2 12.2 4.2 12.2 6.9 C12.2 8.8 11.2 10 10.2 10.6 L10.6 13.2 L8 11.6 C4 12 1.9 9.6 1.9 6.9 C1.9 4.2 3.9 2 7.1 2 Z" fill="#fbd030"/><rect x="6.1" y="4" width="2" height="4.2" fill="#111"/><rect x="6.1" y="9.1" width="2" height="1.9" fill="#111"/></g></svg></div><div style="position:absolute;left:46px;top:146px;font-size:11.65px;line-height:16px;white-space:pre;color:#0000ff;text-decoration:underline">qac-12.2.0-3447</div><div style="position:absolute;left:176px;top:146px;font-size:11.6px;line-height:16px;color:#000;white-space:pre;font-family:'Liberation Sans', sans-serif;">2</div><div style="position:absolute;left:237px;top:146px;font-size:11.2px;line-height:16px;white-space:pre;color:#0000ff;text-decoration:underline">QAC 2.16</div><div style="position:absolute;left:387px;top:146px;font-size:12px;line-height:16px;color:#000;white-space:pre;font-family:'Liberation Sans', sans-serif;">'errLookup' is being declared with external linkage but this declaration is not in a header file.</div><div style="position:absolute;left:1157px;top:146px;font-size:11.65px;line-height:16px;color:#000;white-space:pre;font-family:'Liberation Sans', sans-serif;">inspect.c</div><div style="position:absolute;left:1397px;top:146px;font-size:11.6px;line-height:16px;color:#000;white-space:pre;font-family:'Liberation Sans', sans-serif;">14</div><div style="position:absolute;left:1457px;top:146px;font-size:11.6px;line-height:16px;color:#000;white-space:pre;font-family:'Liberation Sans', sans-serif;">25</div><div style="position:absolute;left:1517px;top:146px;font-size:11.6px;line-height:16px;color:#000;white-space:pre;font-family:'Liberation Sans', sans-serif;">QAC</div><div style="position:absolute;left:24px;top:164px;transform:scale(1.2);transform-origin:0 0"><svg style="position:absolute;left:0px;top:0px" width="15" height="15" viewBox="0 0 15 15"><g transform="translate(0,0)"><path d="M7.1 2 C10.3 2 12.2 4.2 12.2 6.9 C12.2 8.8 11.2 10 10.2 10.6 L10.6 13.2 L8 11.6 C4 12 1.9 9.6 1.9 6.9 C1.9 4.2 3.9 2 7.1 2 Z" fill="#fbd030"/><rect x="6.1" y="4" width="2" height="4.2" fill="#111"/><rect x="6.1" y="9.1" width="2" height="1.9" fill="#111"/></g></svg></div><div style="position:absolute;left:46px;top:166px;font-size:11.65px;line-height:16px;white-space:pre;color:#0000ff;text-decoration:underline">qac-12.2.0-3625</div><div style="position:absolute;left:176px;top:166px;font-size:11.6px;line-height:16px;color:#000;white-space:pre;font-family:'Liberation Sans', sans-serif;">2</div><div style="position:absolute;left:237px;top:166px;font-size:11.2px;line-height:16px;white-space:pre;color:#0000ff;text-decoration:underline">QAC 2.16</div><div style="position:absolute;left:387px;top:166px;font-size:12px;line-height:16px;color:#000;white-space:pre;font-family:'Liberation Sans', sans-serif;">Type 'char' has been used in the declaration of an object or a function.</div><div style="position:absolute;left:1157px;top:166px;font-size:11.65px;line-height:16px;color:#000;white-space:pre;font-family:'Liberation Sans', sans-serif;">inspect.c</div><div style="position:absolute;left:1397px;top:166px;font-size:11.6px;line-height:16px;color:#000;white-space:pre;font-family:'Liberation Sans', sans-serif;">14</div><div style="position:absolute;left:1457px;top:166px;font-size:11.6px;line-height:16px;color:#000;white-space:pre;font-family:'Liberation Sans', sans-serif;">25</div><div style="position:absolute;left:1517px;top:166px;font-size:11.6px;line-height:16px;color:#000;white-space:pre;font-family:'Liberation Sans', sans-serif;">QAC</div><div style="position:absolute;left:24px;top:184px;transform:scale(1.2);transform-origin:0 0"><svg style="position:absolute;left:0px;top:0px" width="15" height="15" viewBox="0 0 15 15"><g transform="translate(0,0)"><path d="M7.1 2 C10.3 2 12.2 4.2 12.2 6.9 C12.2 8.8 11.2 10 10.2 10.6 L10.6 13.2 L8 11.6 C4 12 1.9 9.6 1.9 6.9 C1.9 4.2 3.9 2 7.1 2 Z" fill="#fbd030"/><rect x="6.1" y="4" width="2" height="4.2" fill="#111"/><rect x="6.1" y="9.1" width="2" height="1.9" fill="#111"/></g></svg></div><div style="position:absolute;left:46px;top:186px;font-size:11.65px;line-height:16px;white-space:pre;color:#0000ff;text-decoration:underline">qac-12.2.0-1048</div><div style="position:absolute;left:176px;top:186px;font-size:11.6px;line-height:16px;color:#000;white-space:pre;font-family:'Liberation Sans', sans-serif;">2</div><div style="position:absolute;left:237px;top:186px;font-size:11.2px;line-height:16px;white-space:pre;color:#0000ff;text-decoration:underline">QAC 2.16</div><div style="position:absolute;left:387px;top:186px;font-size:12px;line-height:16px;color:#000;white-space:pre;font-family:'Liberation Sans', sans-serif;">The identifier 'getUpper' is being declared with external linkage but this declaration is not in a header file.</div><div style="position:absolute;left:1157px;top:186px;font-size:11.65px;line-height:16px;color:#000;white-space:pre;font-family:'Liberation Sans', sans-serif;">inspect.c</div><div style="position:absolute;left:1397px;top:186px;font-size:11.6px;line-height:16px;color:#000;white-space:pre;font-family:'Liberation Sans', sans-serif;">15</div><div style="position:absolute;left:1457px;top:186px;font-size:11.6px;line-height:16px;color:#000;white-space:pre;font-family:'Liberation Sans', sans-serif;">25</div><div style="position:absolute;left:1517px;top:186px;font-size:11.6px;line-height:16px;color:#000;white-space:pre;font-family:'Liberation Sans', sans-serif;">QAC</div></div><div style="position:absolute;left:962px;top:805px;width:60px;height:60px;border-radius:50%;background:#ec1c24;color:#fff;font:44px/58px 'Liberation Sans',sans-serif;text-align:center"><div style="transform:scaleX(0.86)">6</div></div><div style="position:absolute;left:2px;top:987px;width:204px;height:21px;background:#f3f3f3;border:1px solid #e4e4e4"></div><div style="position:absolute;left:12px;top:991px;font-size:11.6px;line-height:15px;color:#000;white-space:pre;font-family:'Liberation Sans', sans-serif;">Whole Project Analysis Hard Errors</div><div style="position:absolute;left:205px;top:986px;width:174px;height:24px;background:#f8f8f8;border:1px solid #e4e4e4;border-top:none"></div><div style="position:absolute;left:219px;top:992px;font-size:11.6px;line-height:15px;color:#000;white-space:pre;font-family:'Liberation Sans', sans-serif;">Analysis Results/Diagnostics</div><div style="position:absolute;left:1403px;top:1015px;font-size:11.6px;line-height:15px;color:#000;white-space:pre;font-family:'Liberation Sans', sans-serif;">en_US</div><div style="position:absolute;left:1463px;top:1015px;font-size:11.45px;line-height:15px;color:#000;font-weight:bold;white-space:pre;font-family:'Liberation Sans', sans-serif;">Dashboard Connection Status:</div><div style="position:absolute;left:1636px;top:1015px;font-size:11.6px;line-height:15px;color:#000;white-space:pre;font-family:'Liberation Sans', sans-serif;">Disconnected</div><svg style="position:absolute;left:1734px;top:1013px" width="18" height="17" viewBox="0 0 18 17"><path d="M1.5 8 Q0.5 9 1.5 9.8 L15 16.5 Q17 17.2 17 15 V1.8 Q17 -0.2 15 0.8 Z" fill="#5a00ff"/><path d="M5 9 L8.5 11.5 L12.5 4.5" stroke="#f0f0f0" stroke-width="1.6" fill="none"/></svg><div style="position:absolute;left:1757px;top:1015px;font-size:11.45px;line-height:15px;color:#000;font-weight:bold;white-space:pre;font-family:'Liberation Sans', sans-serif;">Validate Status:</div><div style="position:absolute;left:1847px;top:1015px;font-size:11.6px;line-height:15px;color:#000;white-space:pre;font-family:'Liberation Sans', sans-serif;">Disconnected</div></body></html>
